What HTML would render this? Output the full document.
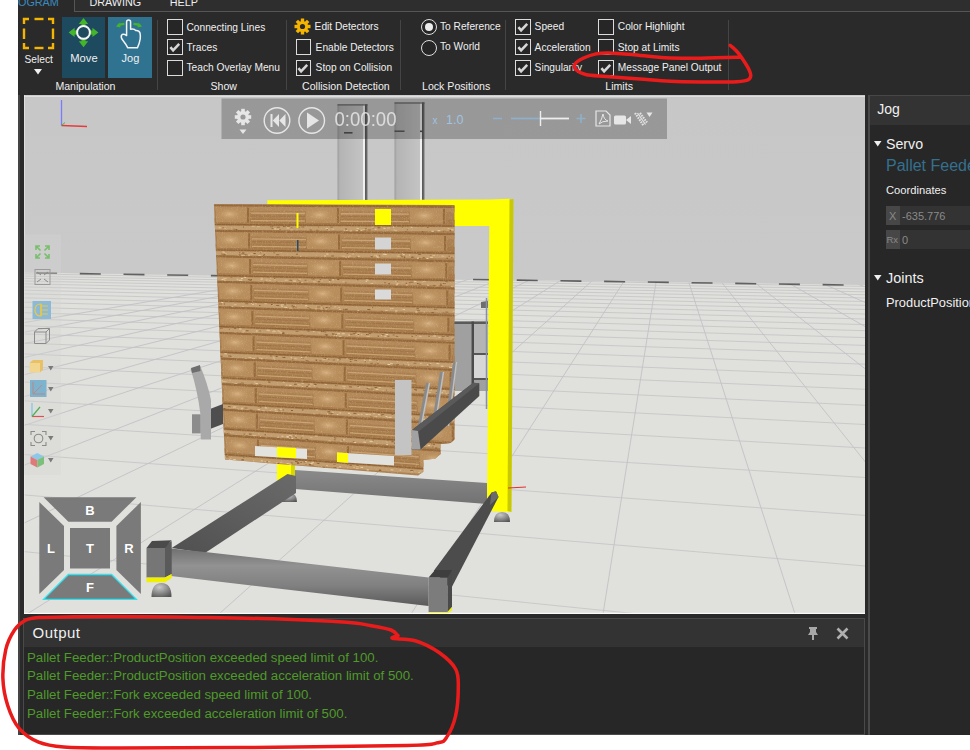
<!DOCTYPE html>
<html><head><meta charset="utf-8">
<style>
*{margin:0;padding:0;box-sizing:border-box}
html,body{width:970px;height:750px;overflow:hidden;background:#fff;font-family:"Liberation Sans",sans-serif;position:relative}
.a{position:absolute}
.t{position:absolute;color:#f0f0f0;font-size:10.2px;white-space:nowrap;line-height:1}
.cb{position:absolute;width:15.7px;height:16.2px;border:1.6px solid #dcdcdc;background:#262626}
.cb svg{position:absolute;left:-1.5px;top:-1.5px}
.sep{position:absolute;top:20px;width:1px;height:70px;background:#454545}
.rd{position:absolute;width:16px;height:16px;border:1.6px solid #e0e0e0;border-radius:50%;background:#262626}
</style></head><body>
<div class="a" style="left:18px;top:0;width:952px;height:735px;background:#2a2a2a"></div>

<!-- tabs -->
<div class="a" style="left:74px;top:-1px;width:896px;height:13px;border-left:1px solid #555;border-bottom:1px solid #555;background:#2e2e2e"></div>
<div class="t" style="left:3px;top:-2.9px;font-size:10.8px;color:#3a8cc0">PROGRAM</div>
<div class="t" style="left:89.4px;top:-2.9px;font-size:10.8px">DRAWING</div>
<div class="t" style="left:169.7px;top:-2.9px;font-size:10.8px">HELP</div>
<div class="a" style="left:0;top:0;width:18px;height:20px;background:#fff"></div>

<!-- ribbon separators -->
<div class="sep" style="left:157px"></div>
<div class="sep" style="left:286px"></div>
<div class="sep" style="left:400px"></div>
<div class="sep" style="left:505px"></div>
<div class="sep" style="left:728px"></div>

<!-- manipulation -->
<svg class="a" style="left:20px;top:15px" width="40" height="40" viewBox="0 0 40 40">
 <g stroke="#f5b400" stroke-width="2.4" fill="none">
  <path d="M4 9 V4 H9"/><path d="M14.5 4 H23.5"/><path d="M28 4 H33 V9"/>
  <path d="M4 13.5 V24"/><path d="M33 13.5 V24"/>
  <path d="M4 28 V33 H9"/><path d="M14.5 33 H23.5"/><path d="M28 33 H33 V28"/>
 </g>
</svg>
<div class="t" style="left:24.5px;top:55.2px">Select</div>
<svg class="a" style="left:34px;top:69px" width="8" height="6"><path d="M0 0 H8 L4 5.5Z" fill="#f0f0f0"/></svg>

<div class="a" style="left:62px;top:17px;width:43px;height:61px;background:#1e4a60"></div>
<svg class="a" style="left:62px;top:17px" width="43" height="40" viewBox="0 0 43 40">
 <g fill="#44b52a">
  <path d="M21.5 0.9 L26.2 7 H23.5 V9.8 H19.5 V7 H16.8Z"/>
  <path d="M21.5 30.3 L26.2 24.2 H23.5 V21 H19.5 V24.2 H16.8Z"/>
  <path d="M6.6 15.4 L12.6 10.7 V13.4 H15.4 V17.4 H12.6 V20.1Z"/>
  <path d="M36.4 15.4 L30.4 10.7 V13.4 H27.6 V17.4 H30.4 V20.1Z"/>
 </g>
 <circle cx="21.5" cy="15.4" r="6.4" fill="none" stroke="#f4f4f4" stroke-width="2"/>
</svg>
<div class="t" style="left:70.3px;top:53.4px;font-size:11.2px">Move</div>

<div class="a" style="left:108px;top:17px;width:44px;height:61px;background:#2f7391"></div>
<svg class="a" style="left:108px;top:17px" width="44" height="40" viewBox="0 0 44 40">
 <path d="M16.5 6.8 Q12.5 7 10 8.6" stroke="#44b52a" stroke-width="2.2" fill="none"/><path d="M8 9.6 L11.5 5.6 L12.5 10.5Z" fill="#44b52a"/>
 <path d="M25.5 6.8 Q29.5 7 32 8.6" stroke="#44b52a" stroke-width="2.2" fill="none"/><path d="M34 9.6 L30.5 5.6 L29.5 10.5Z" fill="#44b52a"/>
 <path d="M18.6 18.5 V5 Q18.6 2.9 20.6 2.9 Q22.6 2.9 22.6 5 V12.2 Q26.5 11.6 27.8 13.6 Q31.2 13.4 32 16 Q32.6 19 32.2 22 Q31.5 26.5 29.4 30.8 H19.8 Q17.8 27 15 23.5 Q12.6 20.5 13.4 18.4 Q15 16.2 18.6 18.5Z" fill="none" stroke="#f4f4f4" stroke-width="1.5" stroke-linejoin="round"/>
</svg>
<div class="t" style="left:121.6px;top:53.4px;font-size:11px">Jog</div>
<div class="t" style="left:55.4px;top:81.1px;font-size:10.6px">Manipulation</div>

<!-- show -->
<div class="cb" style="left:167px;top:19px"></div>
<div class="cb k" style="left:167px;top:39px"><svg width="16" height="16" viewBox="0 0 16 16"><path d="M3.4 8.2 L6.1 11.3 L12.2 4.9" fill="none" stroke="#d6d6d6" stroke-width="2.6" stroke-linejoin="miter" stroke-linecap="butt"/></svg></div>
<div class="cb" style="left:167px;top:60px"></div>
<div class="t" style="left:186.5px;top:22.8px">Connecting Lines</div>
<div class="t" style="left:186.5px;top:43.2px">Traces</div>
<div class="t" style="left:186.5px;top:63.4px">Teach Overlay Menu</div>
<div class="t" style="left:210.5px;top:81.1px;font-size:10.6px">Show</div>

<!-- collision -->
<svg class="a" style="left:294px;top:18px" width="17" height="17" viewBox="0 0 17 17">
 <g fill="#f5b400" transform="translate(8.5 8.5)">
  <circle r="5.6"/>
  <rect x="-1.7" y="-8" width="3.4" height="16"/>
  <rect x="-1.7" y="-8" width="3.4" height="16" transform="rotate(45)"/>
  <rect x="-1.7" y="-8" width="3.4" height="16" transform="rotate(90)"/>
  <rect x="-1.7" y="-8" width="3.4" height="16" transform="rotate(135)"/>
 </g>
 <circle cx="8.5" cy="8.5" r="2.6" fill="#2a2a2a"/>
</svg>
<div class="t" style="left:314.6px;top:21.6px">Edit Detectors</div>
<div class="cb" style="left:295.5px;top:39px"></div>
<div class="cb k" style="left:295.5px;top:60px"><svg width="16" height="16" viewBox="0 0 16 16"><path d="M3.4 8.2 L6.1 11.3 L12.2 4.9" fill="none" stroke="#d6d6d6" stroke-width="2.6" stroke-linejoin="miter" stroke-linecap="butt"/></svg></div>
<div class="t" style="left:315.6px;top:43px">Enable Detectors</div>
<div class="t" style="left:315.6px;top:63.4px">Stop on Collision</div>
<div class="t" style="left:302px;top:81.1px;font-size:10.6px">Collision Detection</div>

<!-- lock -->
<div class="rd" style="left:421px;top:19px"></div>
<div class="a" style="left:425px;top:23px;width:8px;height:8px;border-radius:50%;background:#ececec"></div>
<div class="rd" style="left:421px;top:39.5px"></div>
<div class="t" style="left:440px;top:21.6px">To Reference</div>
<div class="t" style="left:440px;top:41.8px">To World</div>
<div class="t" style="left:422px;top:81.1px;font-size:10.6px">Lock Positions</div>

<!-- limits -->
<div class="cb k" style="left:515px;top:19px"><svg width="16" height="16" viewBox="0 0 16 16"><path d="M3.4 8.2 L6.1 11.3 L12.2 4.9" fill="none" stroke="#d6d6d6" stroke-width="2.6" stroke-linejoin="miter" stroke-linecap="butt"/></svg></div>
<div class="cb k" style="left:515px;top:39px"><svg width="16" height="16" viewBox="0 0 16 16"><path d="M3.4 8.2 L6.1 11.3 L12.2 4.9" fill="none" stroke="#d6d6d6" stroke-width="2.6" stroke-linejoin="miter" stroke-linecap="butt"/></svg></div>
<div class="cb k" style="left:515px;top:60px"><svg width="16" height="16" viewBox="0 0 16 16"><path d="M3.4 8.2 L6.1 11.3 L12.2 4.9" fill="none" stroke="#d6d6d6" stroke-width="2.6" stroke-linejoin="miter" stroke-linecap="butt"/></svg></div>
<div class="t" style="left:534.6px;top:22.4px">Speed</div>
<div class="t" style="left:534.6px;top:43px">Acceleration</div>
<div class="t" style="left:534.6px;top:63.4px">Singularity</div>
<div class="cb" style="left:598px;top:19px"></div>
<div class="cb" style="left:598px;top:39px"></div>
<div class="cb k" style="left:598px;top:60px"><svg width="16" height="16" viewBox="0 0 16 16"><path d="M3.4 8.2 L6.1 11.3 L12.2 4.9" fill="none" stroke="#d6d6d6" stroke-width="2.6" stroke-linejoin="miter" stroke-linecap="butt"/></svg></div>
<div class="t" style="left:617.8px;top:21.8px">Color Highlight</div>
<div class="t" style="left:617.8px;top:43px">Stop at Limits</div>
<div class="t" style="left:617.8px;top:63.4px">Message Panel Output</div>
<div class="t" style="left:605.3px;top:81.1px;font-size:10.6px">Limits</div>

<!-- VIEWPORT -->
<div id="vp" class="a" style="left:24px;top:95px;width:841px;height:519px;background:#c9c9c9;overflow:hidden"><svg style="position:absolute;left:-24px;top:-95px" width="970" height="750" viewBox="0 0 970 750">
<defs>
<linearGradient id="sky" x1="0" y1="0" x2="0" y2="1"><stop offset="0" stop-color="#c7c7c7"/><stop offset="1" stop-color="#cdcdcd"/></linearGradient>
<linearGradient id="pal" x1="0" y1="0" x2="0" y2="1"><stop offset="0" stop-color="#9c6d3e"/><stop offset="0.12" stop-color="#c4925c"/><stop offset="0.45" stop-color="#b9874f"/><stop offset="0.75" stop-color="#ad7a45"/><stop offset="0.86" stop-color="#cfae82"/><stop offset="0.94" stop-color="#a47244"/><stop offset="1" stop-color="#b9a58a"/></linearGradient>
<linearGradient id="palR" x1="0" y1="0" x2="0" y2="1"><stop offset="0" stop-color="#a8794a"/><stop offset="0.5" stop-color="#b5844f"/><stop offset="0.85" stop-color="#c8a678"/><stop offset="1" stop-color="#9a6a3c"/></linearGradient>
<linearGradient id="barV" x1="0" y1="0" x2="1" y2="0"><stop offset="0" stop-color="#a0a0a0"/><stop offset="0.15" stop-color="#c0c0c0"/><stop offset="0.82" stop-color="#b8b8b8"/><stop offset="0.87" stop-color="#6a6a6a"/><stop offset="1" stop-color="#8a8a8a"/></linearGradient>
<linearGradient id="cyl" x1="0" y1="0" x2="0" y2="1"><stop offset="0" stop-color="#8a8a8a"/><stop offset="0.3" stop-color="#9c9c9c"/><stop offset="1" stop-color="#5a5a5a"/></linearGradient>
<linearGradient id="backbar" x1="0" y1="0" x2="0" y2="1"><stop offset="0" stop-color="#8a8a8a"/><stop offset="1" stop-color="#727272"/></linearGradient>
<radialGradient id="foot" cx="0.4" cy="0.3" r="0.8"><stop offset="0" stop-color="#c8c8c8"/><stop offset="1" stop-color="#555"/></radialGradient>
<radialGradient id="blk"><stop offset="0" stop-color="#dbb585" stop-opacity="0.95"/><stop offset="1" stop-color="#b88d5c" stop-opacity="0"/></radialGradient>
</defs>
<rect x="24" y="95" width="841" height="519" fill="url(#sky)"/>
<polygon points="24.0,272.5 865.0,285.0 865.0,614.0 24.0,614.0" fill="#e0e0dc" />
<clipPath id="floorc"><polygon points="24,272.5 865,285 865,614 24,614"/></clipPath>
<g clip-path="url(#floorc)" stroke-width="0.9">
<line x1="24" y1="637.0" x2="865" y2="744.0" stroke="#c6c6c8"/>
<line x1="24" y1="551.6" x2="865" y2="637.0" stroke="#c6c6c8"/>
<line x1="24" y1="494.9" x2="865" y2="566.0" stroke="#c6c6c8"/>
<line x1="24" y1="454.5" x2="865" y2="515.4" stroke="#c6c6c8"/>
<line x1="24" y1="424.3" x2="865" y2="477.5" stroke="#c6c6c8"/>
<line x1="24" y1="400.8" x2="865" y2="448.0" stroke="#c6c6c8"/>
<line x1="24" y1="382.0" x2="865" y2="424.5" stroke="#c6c6c8"/>
<line x1="24" y1="366.7" x2="865" y2="405.3" stroke="#c6c6c8"/>
<line x1="24" y1="353.9" x2="865" y2="389.3" stroke="#c6c6c8"/>
<line x1="24" y1="343.1" x2="865" y2="375.8" stroke="#c6c6c8"/>
<line x1="24" y1="333.9" x2="865" y2="364.2" stroke="#c6c6c8"/>
<line x1="24" y1="325.8" x2="865" y2="354.1" stroke="#c6c6c8"/>
<line x1="24" y1="318.8" x2="865" y2="345.4" stroke="#c6c6c8"/>
<line x1="24" y1="312.7" x2="865" y2="337.6" stroke="#c6c6c8"/>
<line x1="24" y1="307.2" x2="865" y2="330.7" stroke="#c6c6c8"/>
<line x1="24" y1="302.2" x2="865" y2="324.6" stroke="#c6c6c8"/>
<line x1="24" y1="297.8" x2="865" y2="319.0" stroke="#c6c6c8"/>
<line x1="24" y1="293.8" x2="865" y2="314.0" stroke="#c6c6c8"/>
<line x1="24" y1="290.2" x2="865" y2="309.5" stroke="#c6c6c8"/>
<line x1="24" y1="286.9" x2="865" y2="305.3" stroke="#c6c6c8"/>
<line x1="24" y1="283.8" x2="865" y2="301.5" stroke="#c6c6c8"/>
<line x1="24" y1="281.0" x2="865" y2="298.0" stroke="#c6c6c8"/>
<line x1="24" y1="278.4" x2="865" y2="294.7" stroke="#c6c6c8"/>
<line x1="24" y1="276.1" x2="865" y2="291.8" stroke="#c6c6c8"/>
<line x1="24" y1="273.8" x2="865" y2="289.0" stroke="#c6c6c8"/>
<line x1="24" y1="271.8" x2="865" y2="286.4" stroke="#c6c6c8"/>
<line x1="24" y1="269.8" x2="865" y2="284.0" stroke="#c6c6c8"/>
<line x1="24" y1="268.0" x2="865" y2="281.7" stroke="#c6c6c8"/>
<line x1="24" y1="266.3" x2="865" y2="279.6" stroke="#c6c6c8"/>
<line x1="24" y1="264.8" x2="865" y2="277.6" stroke="#c6c6c8"/>
<line x1="24" y1="263.3" x2="865" y2="275.7" stroke="#c6c6c8"/>
<line x1="24" y1="261.8" x2="865" y2="274.0" stroke="#c6c6c8"/>
<line x1="24" y1="260.5" x2="865" y2="272.3" stroke="#c6c6c8"/>
<line x1="24" y1="259.3" x2="865" y2="270.7" stroke="#c6c6c8"/>
<line x1="24" y1="258.1" x2="865" y2="269.2" stroke="#c6c6c8"/>
<line x1="24" y1="256.9" x2="865" y2="267.8" stroke="#c6c6c8"/>
<line x1="24" y1="255.9" x2="865" y2="266.5" stroke="#c6c6c8"/>
<line x1="24" y1="254.8" x2="865" y2="265.2" stroke="#c6c6c8"/>
<line x1="24" y1="253.9" x2="865" y2="264.0" stroke="#c6c6c8"/>
<line x1="24" y1="252.9" x2="865" y2="262.8" stroke="#c6c6c8"/>
<line x1="24" y1="252.1" x2="865" y2="261.7" stroke="#c6c6c8"/>
<line x1="24" y1="251.2" x2="865" y2="260.6" stroke="#c6c6c8"/>
<line x1="24" y1="250.4" x2="865" y2="259.6" stroke="#c6c6c8"/>
<line x1="24" y1="249.6" x2="865" y2="258.6" stroke="#c6c6c8"/>
<line x1="24" y1="248.9" x2="865" y2="257.7" stroke="#c6c6c8"/>
<line x1="24" y1="248.2" x2="865" y2="256.8" stroke="#c6c6c8"/>
<line x1="24" y1="247.5" x2="865" y2="256.0" stroke="#c6c6c8"/>
<line x1="24" y1="246.8" x2="865" y2="255.1" stroke="#c6c6c8"/>
<line x1="24" y1="246.2" x2="865" y2="254.3" stroke="#c6c6c8"/>
<line x1="24" y1="245.6" x2="865" y2="253.6" stroke="#c6c6c8"/>
<line x1="24" y1="245.0" x2="865" y2="252.8" stroke="#c6c6c8"/>
<line x1="24" y1="244.4" x2="865" y2="252.1" stroke="#c6c6c8"/>
<line x1="24" y1="243.9" x2="865" y2="251.5" stroke="#c6c6c8"/>
<line x1="24" y1="243.4" x2="865" y2="250.8" stroke="#c6c6c8"/>
<line x1="24" y1="242.9" x2="865" y2="250.2" stroke="#c6c6c8"/>
<line x1="24" y1="242.4" x2="865" y2="249.5" stroke="#c6c6c8"/>
<line x1="24" y1="241.9" x2="865" y2="249.0" stroke="#c6c6c8"/>
<line x1="24" y1="241.4" x2="865" y2="248.4" stroke="#c6c6c8"/>
<line x1="24" y1="241.0" x2="865" y2="247.8" stroke="#c6c6c8"/>
<line x1="24" y1="240.6" x2="865" y2="247.3" stroke="#c6c6c8"/>
<line x1="24" y1="240.2" x2="865" y2="246.8" stroke="#c6c6c8"/>
<line x1="-1701.0" y1="614" x2="335.5" y2="270" stroke="#c2c2c6"/>
<line x1="-1509.0" y1="614" x2="362.4" y2="270" stroke="#c2c2c6"/>
<line x1="-1317.0" y1="614" x2="389.2" y2="270" stroke="#c2c2c6"/>
<line x1="-1125.0" y1="614" x2="416.1" y2="270" stroke="#c2c2c6"/>
<line x1="-933.0" y1="614" x2="443.0" y2="270" stroke="#c2c2c6"/>
<line x1="-741.0" y1="614" x2="469.9" y2="270" stroke="#c2c2c6"/>
<line x1="-549.0" y1="614" x2="496.8" y2="270" stroke="#c2c2c6"/>
<line x1="-357.0" y1="614" x2="523.6" y2="270" stroke="#c2c2c6"/>
<line x1="-165.0" y1="614" x2="550.5" y2="270" stroke="#c2c2c6"/>
<line x1="27.0" y1="614" x2="577.4" y2="270" stroke="#c2c2c6"/>
<line x1="219.0" y1="614" x2="604.3" y2="270" stroke="#c2c2c6"/>
<line x1="411.0" y1="614" x2="631.2" y2="270" stroke="#c2c2c6"/>
<line x1="603.0" y1="614" x2="658.0" y2="270" stroke="#c2c2c6"/>
<line x1="795.0" y1="614" x2="684.9" y2="270" stroke="#c2c2c6"/>
<line x1="987.0" y1="614" x2="711.8" y2="270" stroke="#c2c2c6"/>
<line x1="1179.0" y1="614" x2="738.7" y2="270" stroke="#c2c2c6"/>
<line x1="1371.0" y1="614" x2="765.6" y2="270" stroke="#c2c2c6"/>
<line x1="1563.0" y1="614" x2="792.4" y2="270" stroke="#c2c2c6"/>
<line x1="1755.0" y1="614" x2="819.3" y2="270" stroke="#c2c2c6"/>
<line x1="1947.0" y1="614" x2="846.2" y2="270" stroke="#c2c2c6"/>
</g>
<line x1="24" y1="272.8" x2="865" y2="285.3" stroke="#3a3a3a" stroke-width="1.6" stroke-dasharray="21,22.7" stroke-dashoffset="31.6" opacity="0.75"/>
<linearGradient id="bar1" x1="0" y1="0" x2="1" y2="0"><stop offset="0" stop-color="#9c9c9c"/><stop offset="0.08" stop-color="#b4b4b4"/><stop offset="0.85" stop-color="#c4c4c4"/><stop offset="0.86" stop-color="#f0f0f0"/><stop offset="0.9" stop-color="#f0f0f0"/><stop offset="0.92" stop-color="#555"/><stop offset="1" stop-color="#777"/></linearGradient>
<rect x="337.5" y="104.3" width="30" height="100" fill="url(#bar1)"/>
<rect x="337.5" y="104.3" width="30" height="1.2" fill="#666"/>
<rect x="394.5" y="102.4" width="30" height="100" fill="url(#bar1)"/>
<rect x="394.5" y="102.4" width="30" height="1.2" fill="#666"/>
<rect x="344" y="132" width="8.5" height="1.6" fill="#555"/>
<rect x="394.5" y="130.5" width="10" height="1.4" fill="#555"/>
<rect x="420" y="130.5" width="2.5" height="1.6" fill="#555"/>
<polygon points="267.3,200.3 489.5,199.5 509.7,198.8 509.7,226.0 267.3,226.0" fill="#ffff00" />
<polygon points="489.5,201.0 513.0,200.0 511.0,512.0 487.0,511.0" fill="#ffff00" />
<polygon points="509.5,199.5 513.5,199.0 511.5,512.0 507.5,511.0" fill="#c9c900" />
<polygon points="454.0,321.5 488.0,321.5 488.0,391.0 454.0,391.0" fill="#a0a0a0" />
<polygon points="454.0,321.5 488.0,321.5 488.0,324.0 454.0,324.0" fill="#5a5a5a" />
<polygon points="471.5,324.0 488.0,324.0 488.0,354.0 471.5,354.0" fill="#b4b4b4" />
<polygon points="471.5,321.5 474.0,321.5 474.0,391.0 471.5,391.0" fill="#4a4a4a" />
<polygon points="474.0,353.0 488.0,353.0 488.0,355.0 474.0,355.0" fill="#555" />
<polygon points="474.0,378.0 488.0,378.0 488.0,380.0 474.0,380.0" fill="#555" />
<polygon points="474.0,355.0 488.0,355.0 488.0,378.0 474.0,378.0" fill="#d6d6d6" />
<polygon points="481.0,302.0 488.0,301.0 488.0,308.0 481.0,308.0" fill="#6e6e6e" />
<line x1="486.5" y1="298" x2="486.5" y2="409" stroke="#8890a0" stroke-width="1.5"/>
<line x1="508" y1="488" x2="526" y2="487" stroke="#e03030" stroke-width="1"/>
<polygon points="295.0,470.0 487.0,483.0 487.0,504.0 295.0,489.0" fill="url(#backbar)" />
<polygon points="277.0,448.0 295.0,448.0 295.0,493.0 277.0,493.0" fill="#ffff00" />
<polygon points="291.0,448.0 295.0,448.0 295.0,493.0 291.0,493.0" fill="#d8d800" />
<path d="M282 502 Q282 493 289.5 493 Q297 493 297 502 Z" fill="url(#foot)"/>
<path d="M494 522 Q494 512 502 512 Q510 512 510 522 Z" fill="url(#foot)"/>
<clipPath id="stk"><polygon points="213.9,204.2 454.5,205 454.5,439.3 450.7,443 440.5,444 440.5,454 435,458.8 423.3,459.7 423.3,471.7 418.2,475.5 225,459.5"/></clipPath>
<g clip-path="url(#stk)">
<rect x="210" y="200" width="250" height="280" fill="#ab8051"/>
<g transform="matrix(1 0.00692 0 1 0 -1.480)">
<rect x="213.9" y="204.2" width="242.6" height="2.2" fill="#94683a"/>
<rect x="213.9" y="206.4" width="242.6" height="4" fill="#b4895a"/>
<rect x="213.9" y="218.2" width="242.6" height="5" fill="#a57848"/>
<rect x="215.9" y="207.2" width="34" height="15" fill="#b88d5c"/>
<ellipse cx="229.5" cy="214.2" rx="14.3" ry="7" fill="url(#blk)"/>
<rect x="246.9" y="207.2" width="2.2" height="15" fill="#8e6234" opacity="0.8"/>
<rect x="305.9" y="207.2" width="34" height="15" fill="#b88d5c"/>
<ellipse cx="319.5" cy="214.2" rx="14.3" ry="7" fill="url(#blk)"/>
<rect x="336.9" y="207.2" width="2.2" height="15" fill="#8e6234" opacity="0.8"/>
<rect x="409.9" y="207.2" width="36" height="15" fill="#b88d5c"/>
<ellipse cx="424.3" cy="214.2" rx="15.1" ry="7" fill="url(#blk)"/>
<rect x="442.9" y="207.2" width="2.2" height="15" fill="#8e6234" opacity="0.8"/>
<rect x="250.9" y="212.2" width="54.0" height="1.3" fill="#caa374"/>
<rect x="250.9" y="219.7" width="54.0" height="1.3" fill="#c9a272"/>
<rect x="250.9" y="215.2" width="54.0" height="1" fill="#9c6e3e" opacity="0.7"/>
<rect x="340.9" y="212.2" width="68.0" height="1.3" fill="#caa374"/>
<rect x="340.9" y="219.7" width="68.0" height="1.3" fill="#c9a272"/>
<rect x="340.9" y="215.2" width="68.0" height="1" fill="#9c6e3e" opacity="0.7"/>
<rect x="213.9" y="223.7" width="242.6" height="1.4" fill="#8d6134"/>
<rect x="213.9" y="225.7" width="242.6" height="4" fill="#c29d6f"/>
<rect x="271.6" y="227.6" width="1.8" height="1" fill="#9a6c3c"/>
<rect x="365.7" y="225.5" width="1.0" height="1" fill="#9a6c3c"/>
<rect x="276.8" y="226.3" width="3.2" height="1" fill="#9a6c3c"/>
<rect x="345.1" y="227.7" width="1.9" height="1" fill="#8a5e32"/>
<rect x="270.2" y="225.9" width="3.0" height="1" fill="#9a6c3c"/>
<rect x="393.7" y="228.2" width="1.1" height="1" fill="#e6cfa6"/>
<rect x="287.0" y="225.3" width="2.9" height="1" fill="#9a6c3c"/>
<rect x="358.2" y="229.3" width="1.9" height="1" fill="#9a6c3c"/>
<rect x="309.7" y="228.8" width="2.0" height="1" fill="#8a5e32"/>
<rect x="427.1" y="225.6" width="1.3" height="1" fill="#8a5e32"/>
<rect x="276.5" y="228.2" width="2.7" height="1" fill="#dcbc8c"/>
<rect x="316.1" y="229.0" width="2.3" height="1" fill="#9a6c3c"/>
<rect x="355.6" y="229.3" width="2.5" height="1" fill="#e6cfa6"/>
<rect x="421.7" y="229.7" width="2.5" height="1" fill="#8a5e32"/>
<rect x="383.4" y="226.7" width="2.2" height="1" fill="#e6cfa6"/>
<rect x="387.1" y="226.2" width="2.8" height="1" fill="#dcbc8c"/>
<rect x="283.0" y="225.5" width="2.9" height="1" fill="#9a6c3c"/>
<rect x="235.4" y="228.8" width="1.9" height="1" fill="#8a5e32"/>
<rect x="218.8" y="227.1" width="1.9" height="1" fill="#e6cfa6"/>
<rect x="224.6" y="228.0" width="1.1" height="1" fill="#dcbc8c"/>
<rect x="347.5" y="229.3" width="1.6" height="1" fill="#8a5e32"/>
<rect x="456.1" y="226.6" width="1.2" height="1" fill="#e6cfa6"/>
<rect x="444.1" y="229.6" width="1.6" height="1" fill="#dcbc8c"/>
<rect x="251.8" y="225.4" width="2.9" height="1" fill="#dcbc8c"/>
<rect x="301.3" y="225.8" width="2.9" height="1" fill="#9a6c3c"/>
<rect x="325.6" y="227.5" width="2.4" height="1" fill="#e6cfa6"/>
<rect x="364.3" y="229.4" width="2.1" height="1" fill="#9a6c3c"/>
<rect x="367.8" y="228.4" width="3.1" height="1" fill="#9a6c3c"/>
<rect x="451.1" y="227.5" width="2.2" height="1" fill="#e6cfa6"/>
<rect x="405.2" y="229.6" width="1.7" height="1" fill="#9a6c3c"/>
<rect x="363.3" y="228.0" width="1.1" height="1" fill="#dcbc8c"/>
<rect x="327.0" y="228.3" width="1.8" height="1" fill="#dcbc8c"/>
<rect x="392.9" y="225.3" width="1.1" height="1" fill="#e6cfa6"/>
<rect x="447.6" y="226.3" width="2.0" height="1" fill="#dcbc8c"/>
<rect x="256.9" y="226.0" width="2.7" height="1" fill="#dcbc8c"/>
<rect x="286.8" y="226.9" width="2.7" height="1" fill="#e6cfa6"/>
<rect x="449.6" y="228.3" width="1.3" height="1" fill="#8a5e32"/>
<rect x="372.5" y="226.4" width="1.7" height="1" fill="#9a6c3c"/>
<rect x="371.5" y="225.6" width="2.3" height="1" fill="#dcbc8c"/>
<rect x="377.6" y="226.2" width="2.8" height="1" fill="#8a5e32"/>
<rect x="233.3" y="228.5" width="1.5" height="1" fill="#9a6c3c"/>
<rect x="279.5" y="228.7" width="1.1" height="1" fill="#8a5e32"/>
<rect x="290.4" y="229.0" width="2.3" height="1" fill="#dcbc8c"/>
<rect x="296.4" y="228.9" width="1.2" height="1" fill="#dcbc8c"/>
<rect x="356.9" y="227.1" width="2.1" height="1" fill="#dcbc8c"/>
<rect x="326.6" y="228.1" width="1.6" height="1" fill="#9a6c3c"/>
<rect x="222.5" y="227.1" width="1.4" height="1" fill="#9a6c3c"/>
<rect x="442.7" y="229.2" width="3.2" height="1" fill="#9a6c3c"/>
<rect x="349.5" y="229.6" width="2.6" height="1" fill="#e6cfa6"/>
<rect x="394.8" y="229.0" width="2.5" height="1" fill="#dcbc8c"/>
<rect x="345.8" y="229.2" width="2.9" height="1" fill="#dcbc8c"/>
<rect x="243.0" y="226.3" width="1.1" height="1" fill="#8a5e32"/>
<rect x="431.4" y="229.2" width="2.3" height="1" fill="#e6cfa6"/>
<rect x="330.6" y="225.7" width="2.1" height="1" fill="#8a5e32"/>
<rect x="374.7" y="227.6" width="1.9" height="1" fill="#e6cfa6"/>
<rect x="296.7" y="226.3" width="2.9" height="1" fill="#9a6c3c"/>
<rect x="410.8" y="225.5" width="1.5" height="1" fill="#e6cfa6"/>
<rect x="343.6" y="228.9" width="1.4" height="1" fill="#dcbc8c"/>
<rect x="437.5" y="228.8" width="2.8" height="1" fill="#e6cfa6"/>
<rect x="332.2" y="227.8" width="1.9" height="1" fill="#dcbc8c"/>
<rect x="274.1" y="228.0" width="2.1" height="1" fill="#e6cfa6"/>
<rect x="328.6" y="228.7" width="1.0" height="1" fill="#e6cfa6"/>
<rect x="402.0" y="225.4" width="1.1" height="1" fill="#9a6c3c"/>
<rect x="450.4" y="229.0" width="1.2" height="1" fill="#9a6c3c"/>
<rect x="290.5" y="226.6" width="1.8" height="1" fill="#9a6c3c"/>
<rect x="356.2" y="226.8" width="1.4" height="1" fill="#dcbc8c"/>
<rect x="317.9" y="225.8" width="1.0" height="1" fill="#9a6c3c"/>
<rect x="406.8" y="227.8" width="1.1" height="1" fill="#9a6c3c"/>
<rect x="360.5" y="228.7" width="1.8" height="1" fill="#e6cfa6"/>
<rect x="365.0" y="227.1" width="1.8" height="1" fill="#9a6c3c"/>
</g>
<g transform="matrix(1 0.01408 0 1 0 -3.014)">
<rect x="215.01000000000002" y="229.7" width="241.5" height="2.2" fill="#94683a"/>
<rect x="215.01000000000002" y="231.9" width="241.5" height="4" fill="#b4895a"/>
<rect x="215.01000000000002" y="243.7" width="241.5" height="5" fill="#a57848"/>
<rect x="217.0" y="232.7" width="34" height="15" fill="#b88d5c"/>
<ellipse cx="230.6" cy="239.7" rx="14.3" ry="7" fill="url(#blk)"/>
<rect x="248.0" y="232.7" width="2.2" height="15" fill="#8e6234" opacity="0.8"/>
<rect x="307.0" y="232.7" width="34" height="15" fill="#b88d5c"/>
<ellipse cx="320.6" cy="239.7" rx="14.3" ry="7" fill="url(#blk)"/>
<rect x="338.0" y="232.7" width="2.2" height="15" fill="#8e6234" opacity="0.8"/>
<rect x="411.0" y="232.7" width="36" height="15" fill="#b88d5c"/>
<ellipse cx="425.4" cy="239.7" rx="15.1" ry="7" fill="url(#blk)"/>
<rect x="444.0" y="232.7" width="2.2" height="15" fill="#8e6234" opacity="0.8"/>
<rect x="252.0" y="237.7" width="54.0" height="1.3" fill="#caa374"/>
<rect x="252.0" y="245.2" width="54.0" height="1.3" fill="#c9a272"/>
<rect x="252.0" y="240.7" width="54.0" height="1" fill="#9c6e3e" opacity="0.7"/>
<rect x="342.0" y="237.7" width="68.0" height="1.3" fill="#caa374"/>
<rect x="342.0" y="245.2" width="68.0" height="1.3" fill="#c9a272"/>
<rect x="342.0" y="240.7" width="68.0" height="1" fill="#9c6e3e" opacity="0.7"/>
<rect x="215.0" y="249.2" width="241.5" height="1.4" fill="#8d6134"/>
<rect x="215.0" y="251.2" width="241.5" height="4" fill="#c29d6f"/>
<rect x="398.6" y="252.1" width="3.1" height="1" fill="#9a6c3c"/>
<rect x="326.3" y="251.8" width="2.2" height="1" fill="#e6cfa6"/>
<rect x="409.0" y="251.7" width="1.3" height="1" fill="#e6cfa6"/>
<rect x="441.2" y="252.4" width="3.0" height="1" fill="#dcbc8c"/>
<rect x="244.3" y="253.8" width="3.1" height="1" fill="#9a6c3c"/>
<rect x="376.2" y="254.0" width="2.2" height="1" fill="#e6cfa6"/>
<rect x="411.0" y="253.9" width="2.0" height="1" fill="#8a5e32"/>
<rect x="402.0" y="250.9" width="1.2" height="1" fill="#e6cfa6"/>
<rect x="374.2" y="252.4" width="2.8" height="1" fill="#dcbc8c"/>
<rect x="418.2" y="251.2" width="2.9" height="1" fill="#9a6c3c"/>
<rect x="416.9" y="255.0" width="2.3" height="1" fill="#e6cfa6"/>
<rect x="223.8" y="254.1" width="2.1" height="1" fill="#8a5e32"/>
<rect x="240.8" y="254.1" width="3.1" height="1" fill="#e6cfa6"/>
<rect x="347.9" y="254.6" width="1.4" height="1" fill="#e6cfa6"/>
<rect x="273.5" y="251.5" width="1.5" height="1" fill="#9a6c3c"/>
<rect x="276.1" y="253.4" width="3.1" height="1" fill="#9a6c3c"/>
<rect x="448.4" y="252.4" width="1.5" height="1" fill="#9a6c3c"/>
<rect x="418.7" y="255.0" width="1.9" height="1" fill="#9a6c3c"/>
<rect x="252.7" y="252.5" width="3.0" height="1" fill="#8a5e32"/>
<rect x="238.2" y="254.0" width="3.0" height="1" fill="#9a6c3c"/>
<rect x="356.6" y="254.5" width="1.3" height="1" fill="#8a5e32"/>
<rect x="250.4" y="253.0" width="3.1" height="1" fill="#dcbc8c"/>
<rect x="377.1" y="254.5" width="2.3" height="1" fill="#dcbc8c"/>
<rect x="429.8" y="252.1" width="1.6" height="1" fill="#9a6c3c"/>
<rect x="263.5" y="253.2" width="1.5" height="1" fill="#9a6c3c"/>
<rect x="402.0" y="251.3" width="3.2" height="1" fill="#9a6c3c"/>
<rect x="384.4" y="251.6" width="2.3" height="1" fill="#e6cfa6"/>
<rect x="331.2" y="253.9" width="2.9" height="1" fill="#9a6c3c"/>
<rect x="404.1" y="254.6" width="1.1" height="1" fill="#8a5e32"/>
<rect x="430.2" y="253.6" width="2.7" height="1" fill="#e6cfa6"/>
<rect x="446.5" y="254.5" width="1.5" height="1" fill="#8a5e32"/>
<rect x="402.4" y="251.3" width="2.4" height="1" fill="#e6cfa6"/>
<rect x="432.3" y="251.8" width="2.9" height="1" fill="#dcbc8c"/>
<rect x="259.3" y="251.1" width="2.8" height="1" fill="#e6cfa6"/>
<rect x="237.4" y="254.4" width="1.6" height="1" fill="#dcbc8c"/>
<rect x="324.2" y="254.0" width="1.7" height="1" fill="#e6cfa6"/>
<rect x="295.9" y="252.6" width="2.1" height="1" fill="#8a5e32"/>
<rect x="370.6" y="254.0" width="2.1" height="1" fill="#8a5e32"/>
<rect x="346.5" y="251.2" width="1.6" height="1" fill="#9a6c3c"/>
<rect x="242.2" y="254.7" width="3.0" height="1" fill="#e6cfa6"/>
<rect x="342.4" y="253.8" width="2.5" height="1" fill="#dcbc8c"/>
<rect x="397.9" y="252.0" width="2.5" height="1" fill="#dcbc8c"/>
<rect x="240.9" y="254.9" width="1.7" height="1" fill="#e6cfa6"/>
<rect x="376.1" y="253.0" width="1.1" height="1" fill="#dcbc8c"/>
<rect x="378.9" y="253.2" width="1.4" height="1" fill="#8a5e32"/>
<rect x="258.3" y="254.7" width="2.4" height="1" fill="#e6cfa6"/>
<rect x="241.1" y="253.2" width="3.0" height="1" fill="#9a6c3c"/>
<rect x="349.0" y="253.6" width="2.0" height="1" fill="#dcbc8c"/>
<rect x="403.9" y="253.9" width="1.2" height="1" fill="#8a5e32"/>
<rect x="397.2" y="253.1" width="2.6" height="1" fill="#dcbc8c"/>
<rect x="239.1" y="251.9" width="1.1" height="1" fill="#8a5e32"/>
<rect x="225.2" y="253.0" width="1.5" height="1" fill="#dcbc8c"/>
<rect x="426.4" y="254.9" width="2.0" height="1" fill="#e6cfa6"/>
<rect x="300.2" y="254.5" width="1.2" height="1" fill="#dcbc8c"/>
<rect x="357.5" y="253.7" width="2.2" height="1" fill="#e6cfa6"/>
<rect x="259.6" y="251.5" width="1.9" height="1" fill="#9a6c3c"/>
<rect x="412.0" y="254.0" width="2.3" height="1" fill="#8a5e32"/>
<rect x="422.6" y="254.3" width="2.2" height="1" fill="#8a5e32"/>
<rect x="352.3" y="251.6" width="1.6" height="1" fill="#dcbc8c"/>
<rect x="222.3" y="254.3" width="3.0" height="1" fill="#9a6c3c"/>
<rect x="291.3" y="254.8" width="1.7" height="1" fill="#9a6c3c"/>
<rect x="450.9" y="253.8" width="1.7" height="1" fill="#9a6c3c"/>
<rect x="222.3" y="251.5" width="2.4" height="1" fill="#e6cfa6"/>
<rect x="401.1" y="253.7" width="2.1" height="1" fill="#9a6c3c"/>
<rect x="263.0" y="254.2" width="1.5" height="1" fill="#9a6c3c"/>
<rect x="242.0" y="252.0" width="2.4" height="1" fill="#8a5e32"/>
<rect x="247.8" y="254.2" width="2.4" height="1" fill="#e6cfa6"/>
<rect x="221.2" y="253.5" width="2.1" height="1" fill="#9a6c3c"/>
<rect x="345.1" y="254.9" width="1.7" height="1" fill="#dcbc8c"/>
<rect x="382.8" y="251.3" width="2.9" height="1" fill="#e6cfa6"/>
</g>
<g transform="matrix(1 0.02125 0 1 0 -4.547)">
<rect x="216.12" y="255.2" width="240.4" height="2.2" fill="#94683a"/>
<rect x="216.12" y="257.4" width="240.4" height="4" fill="#b4895a"/>
<rect x="216.12" y="269.2" width="240.4" height="5" fill="#a57848"/>
<rect x="218.1" y="258.2" width="34" height="15" fill="#b88d5c"/>
<ellipse cx="231.7" cy="265.2" rx="14.3" ry="7" fill="url(#blk)"/>
<rect x="249.1" y="258.2" width="2.2" height="15" fill="#8e6234" opacity="0.8"/>
<rect x="308.1" y="258.2" width="34" height="15" fill="#b88d5c"/>
<ellipse cx="321.7" cy="265.2" rx="14.3" ry="7" fill="url(#blk)"/>
<rect x="339.1" y="258.2" width="2.2" height="15" fill="#8e6234" opacity="0.8"/>
<rect x="412.1" y="258.2" width="36" height="15" fill="#b88d5c"/>
<ellipse cx="426.5" cy="265.2" rx="15.1" ry="7" fill="url(#blk)"/>
<rect x="445.1" y="258.2" width="2.2" height="15" fill="#8e6234" opacity="0.8"/>
<rect x="253.1" y="263.2" width="54.0" height="1.3" fill="#caa374"/>
<rect x="253.1" y="270.7" width="54.0" height="1.3" fill="#c9a272"/>
<rect x="253.1" y="266.2" width="54.0" height="1" fill="#9c6e3e" opacity="0.7"/>
<rect x="343.1" y="263.2" width="68.0" height="1.3" fill="#caa374"/>
<rect x="343.1" y="270.7" width="68.0" height="1.3" fill="#c9a272"/>
<rect x="343.1" y="266.2" width="68.0" height="1" fill="#9c6e3e" opacity="0.7"/>
<rect x="216.1" y="274.7" width="240.4" height="1.4" fill="#8d6134"/>
<rect x="216.1" y="276.7" width="240.4" height="4" fill="#c29d6f"/>
<rect x="388.2" y="279.5" width="1.8" height="1" fill="#8a5e32"/>
<rect x="440.1" y="280.0" width="2.0" height="1" fill="#8a5e32"/>
<rect x="332.7" y="276.7" width="1.1" height="1" fill="#e6cfa6"/>
<rect x="419.3" y="279.3" width="1.9" height="1" fill="#9a6c3c"/>
<rect x="384.2" y="278.6" width="1.9" height="1" fill="#9a6c3c"/>
<rect x="289.4" y="278.2" width="2.7" height="1" fill="#9a6c3c"/>
<rect x="321.5" y="278.2" width="1.1" height="1" fill="#dcbc8c"/>
<rect x="304.3" y="277.8" width="2.2" height="1" fill="#9a6c3c"/>
<rect x="269.9" y="276.2" width="1.5" height="1" fill="#dcbc8c"/>
<rect x="250.6" y="278.2" width="1.4" height="1" fill="#8a5e32"/>
<rect x="221.5" y="278.8" width="2.1" height="1" fill="#e6cfa6"/>
<rect x="249.6" y="278.9" width="2.0" height="1" fill="#8a5e32"/>
<rect x="230.5" y="276.3" width="2.0" height="1" fill="#9a6c3c"/>
<rect x="224.0" y="279.4" width="1.5" height="1" fill="#e6cfa6"/>
<rect x="311.5" y="276.3" width="3.1" height="1" fill="#8a5e32"/>
<rect x="274.2" y="277.9" width="1.4" height="1" fill="#dcbc8c"/>
<rect x="365.7" y="277.7" width="1.3" height="1" fill="#e6cfa6"/>
<rect x="410.2" y="277.5" width="3.2" height="1" fill="#9a6c3c"/>
<rect x="405.8" y="280.5" width="2.1" height="1" fill="#dcbc8c"/>
<rect x="223.4" y="277.7" width="3.2" height="1" fill="#dcbc8c"/>
<rect x="238.6" y="279.2" width="3.1" height="1" fill="#e6cfa6"/>
<rect x="241.3" y="279.2" width="1.0" height="1" fill="#e6cfa6"/>
<rect x="331.9" y="277.0" width="2.1" height="1" fill="#dcbc8c"/>
<rect x="264.4" y="280.5" width="2.0" height="1" fill="#9a6c3c"/>
<rect x="436.6" y="280.4" width="1.1" height="1" fill="#dcbc8c"/>
<rect x="396.8" y="279.0" width="1.9" height="1" fill="#dcbc8c"/>
<rect x="260.4" y="278.0" width="2.1" height="1" fill="#dcbc8c"/>
<rect x="345.1" y="279.7" width="1.9" height="1" fill="#9a6c3c"/>
<rect x="417.0" y="278.7" width="3.0" height="1" fill="#dcbc8c"/>
<rect x="408.8" y="278.1" width="2.0" height="1" fill="#9a6c3c"/>
<rect x="299.1" y="279.9" width="2.1" height="1" fill="#9a6c3c"/>
<rect x="444.4" y="276.4" width="1.4" height="1" fill="#e6cfa6"/>
<rect x="413.9" y="276.6" width="2.5" height="1" fill="#e6cfa6"/>
<rect x="293.1" y="278.9" width="2.8" height="1" fill="#e6cfa6"/>
<rect x="427.3" y="280.1" width="2.0" height="1" fill="#dcbc8c"/>
<rect x="455.8" y="276.2" width="1.4" height="1" fill="#e6cfa6"/>
<rect x="297.5" y="277.6" width="2.0" height="1" fill="#8a5e32"/>
<rect x="274.0" y="276.4" width="1.3" height="1" fill="#8a5e32"/>
<rect x="356.9" y="276.2" width="1.5" height="1" fill="#8a5e32"/>
<rect x="269.0" y="278.7" width="1.9" height="1" fill="#dcbc8c"/>
<rect x="405.7" y="278.6" width="1.4" height="1" fill="#8a5e32"/>
<rect x="365.7" y="276.3" width="2.8" height="1" fill="#e6cfa6"/>
<rect x="422.6" y="276.6" width="3.1" height="1" fill="#dcbc8c"/>
<rect x="236.7" y="278.3" width="1.5" height="1" fill="#e6cfa6"/>
<rect x="370.4" y="279.6" width="2.9" height="1" fill="#dcbc8c"/>
<rect x="313.0" y="279.1" width="2.7" height="1" fill="#dcbc8c"/>
<rect x="416.9" y="278.8" width="2.8" height="1" fill="#8a5e32"/>
<rect x="244.2" y="276.2" width="1.7" height="1" fill="#e6cfa6"/>
<rect x="298.2" y="277.0" width="2.7" height="1" fill="#dcbc8c"/>
<rect x="317.8" y="279.1" width="2.3" height="1" fill="#8a5e32"/>
<rect x="276.2" y="279.9" width="1.1" height="1" fill="#8a5e32"/>
<rect x="319.7" y="276.5" width="1.5" height="1" fill="#8a5e32"/>
<rect x="396.3" y="277.1" width="1.5" height="1" fill="#9a6c3c"/>
<rect x="440.0" y="278.6" width="1.9" height="1" fill="#8a5e32"/>
<rect x="433.2" y="280.4" width="2.1" height="1" fill="#9a6c3c"/>
<rect x="329.0" y="278.8" width="1.1" height="1" fill="#e6cfa6"/>
<rect x="260.5" y="276.6" width="2.6" height="1" fill="#dcbc8c"/>
<rect x="337.2" y="276.4" width="2.0" height="1" fill="#8a5e32"/>
<rect x="395.2" y="277.4" width="2.0" height="1" fill="#dcbc8c"/>
<rect x="328.7" y="277.0" width="2.7" height="1" fill="#8a5e32"/>
<rect x="241.0" y="277.5" width="1.9" height="1" fill="#e6cfa6"/>
<rect x="265.5" y="278.4" width="2.8" height="1" fill="#dcbc8c"/>
<rect x="450.8" y="280.6" width="2.9" height="1" fill="#dcbc8c"/>
<rect x="442.8" y="278.1" width="3.1" height="1" fill="#9a6c3c"/>
<rect x="342.5" y="278.6" width="1.8" height="1" fill="#dcbc8c"/>
<rect x="284.7" y="278.2" width="3.0" height="1" fill="#dcbc8c"/>
<rect x="395.8" y="280.3" width="2.1" height="1" fill="#e6cfa6"/>
<rect x="247.7" y="278.5" width="2.2" height="1" fill="#8a5e32"/>
<rect x="444.5" y="276.2" width="3.2" height="1" fill="#9a6c3c"/>
<rect x="301.4" y="280.5" width="1.8" height="1" fill="#e6cfa6"/>
</g>
<g transform="matrix(1 0.02842 0 1 0 -6.081)">
<rect x="217.23000000000002" y="280.6" width="239.3" height="2.2" fill="#94683a"/>
<rect x="217.23000000000002" y="282.8" width="239.3" height="4" fill="#b4895a"/>
<rect x="217.23000000000002" y="294.6" width="239.3" height="5" fill="#a57848"/>
<rect x="219.2" y="283.6" width="34" height="15" fill="#b88d5c"/>
<ellipse cx="232.8" cy="290.6" rx="14.3" ry="7" fill="url(#blk)"/>
<rect x="250.2" y="283.6" width="2.2" height="15" fill="#8e6234" opacity="0.8"/>
<rect x="309.2" y="283.6" width="34" height="15" fill="#b88d5c"/>
<ellipse cx="322.8" cy="290.6" rx="14.3" ry="7" fill="url(#blk)"/>
<rect x="340.2" y="283.6" width="2.2" height="15" fill="#8e6234" opacity="0.8"/>
<rect x="413.2" y="283.6" width="36" height="15" fill="#b88d5c"/>
<ellipse cx="427.6" cy="290.6" rx="15.1" ry="7" fill="url(#blk)"/>
<rect x="446.2" y="283.6" width="2.2" height="15" fill="#8e6234" opacity="0.8"/>
<rect x="254.2" y="288.6" width="54.0" height="1.3" fill="#caa374"/>
<rect x="254.2" y="296.1" width="54.0" height="1.3" fill="#c9a272"/>
<rect x="254.2" y="291.6" width="54.0" height="1" fill="#9c6e3e" opacity="0.7"/>
<rect x="344.2" y="288.6" width="68.0" height="1.3" fill="#caa374"/>
<rect x="344.2" y="296.1" width="68.0" height="1.3" fill="#c9a272"/>
<rect x="344.2" y="291.6" width="68.0" height="1" fill="#9c6e3e" opacity="0.7"/>
<rect x="217.2" y="300.1" width="239.3" height="1.4" fill="#8d6134"/>
<rect x="217.2" y="302.1" width="239.3" height="4" fill="#c29d6f"/>
<rect x="334.5" y="302.7" width="1.6" height="1" fill="#dcbc8c"/>
<rect x="417.1" y="304.4" width="2.8" height="1" fill="#9a6c3c"/>
<rect x="291.8" y="302.8" width="2.8" height="1" fill="#9a6c3c"/>
<rect x="390.2" y="303.2" width="1.1" height="1" fill="#e6cfa6"/>
<rect x="367.4" y="304.7" width="3.0" height="1" fill="#8a5e32"/>
<rect x="445.4" y="305.0" width="2.9" height="1" fill="#9a6c3c"/>
<rect x="339.0" y="305.4" width="2.2" height="1" fill="#dcbc8c"/>
<rect x="221.2" y="301.8" width="2.1" height="1" fill="#e6cfa6"/>
<rect x="431.8" y="305.7" width="2.0" height="1" fill="#9a6c3c"/>
<rect x="306.0" y="304.5" width="1.6" height="1" fill="#e6cfa6"/>
<rect x="380.8" y="306.1" width="2.2" height="1" fill="#9a6c3c"/>
<rect x="402.5" y="303.6" width="1.6" height="1" fill="#dcbc8c"/>
<rect x="325.5" y="306.0" width="1.3" height="1" fill="#dcbc8c"/>
<rect x="250.6" y="301.8" width="2.1" height="1" fill="#8a5e32"/>
<rect x="415.3" y="305.8" width="2.3" height="1" fill="#e6cfa6"/>
<rect x="293.0" y="304.3" width="1.3" height="1" fill="#8a5e32"/>
<rect x="284.2" y="304.8" width="3.0" height="1" fill="#e6cfa6"/>
<rect x="321.4" y="302.0" width="1.1" height="1" fill="#9a6c3c"/>
<rect x="431.5" y="306.0" width="2.4" height="1" fill="#8a5e32"/>
<rect x="291.7" y="303.2" width="2.4" height="1" fill="#9a6c3c"/>
<rect x="292.9" y="302.9" width="3.1" height="1" fill="#dcbc8c"/>
<rect x="293.2" y="303.4" width="1.6" height="1" fill="#8a5e32"/>
<rect x="317.1" y="303.5" width="3.0" height="1" fill="#9a6c3c"/>
<rect x="272.2" y="302.5" width="1.2" height="1" fill="#e6cfa6"/>
<rect x="395.0" y="305.4" width="2.4" height="1" fill="#e6cfa6"/>
<rect x="442.7" y="306.0" width="2.5" height="1" fill="#9a6c3c"/>
<rect x="281.3" y="303.8" width="1.6" height="1" fill="#e6cfa6"/>
<rect x="259.0" y="303.8" width="1.4" height="1" fill="#8a5e32"/>
<rect x="433.9" y="302.4" width="3.2" height="1" fill="#9a6c3c"/>
<rect x="372.0" y="302.3" width="1.1" height="1" fill="#8a5e32"/>
<rect x="291.6" y="304.6" width="1.3" height="1" fill="#8a5e32"/>
<rect x="228.9" y="306.0" width="2.2" height="1" fill="#9a6c3c"/>
<rect x="403.6" y="303.6" width="1.4" height="1" fill="#e6cfa6"/>
<rect x="284.4" y="302.2" width="1.3" height="1" fill="#8a5e32"/>
<rect x="309.0" y="305.9" width="2.3" height="1" fill="#8a5e32"/>
<rect x="219.0" y="303.3" width="1.3" height="1" fill="#9a6c3c"/>
<rect x="276.1" y="303.2" width="3.1" height="1" fill="#9a6c3c"/>
<rect x="242.1" y="305.5" width="2.0" height="1" fill="#dcbc8c"/>
<rect x="344.3" y="305.5" width="2.0" height="1" fill="#9a6c3c"/>
<rect x="328.3" y="304.1" width="2.0" height="1" fill="#9a6c3c"/>
<rect x="416.5" y="302.5" width="2.3" height="1" fill="#8a5e32"/>
<rect x="289.2" y="305.5" width="3.1" height="1" fill="#dcbc8c"/>
<rect x="280.8" y="302.6" width="1.1" height="1" fill="#e6cfa6"/>
<rect x="315.2" y="305.6" width="1.3" height="1" fill="#e6cfa6"/>
<rect x="255.0" y="302.2" width="1.9" height="1" fill="#dcbc8c"/>
<rect x="342.9" y="305.1" width="1.2" height="1" fill="#9a6c3c"/>
<rect x="295.2" y="304.3" width="1.5" height="1" fill="#9a6c3c"/>
<rect x="338.4" y="303.3" width="1.7" height="1" fill="#dcbc8c"/>
<rect x="385.3" y="305.1" width="2.6" height="1" fill="#dcbc8c"/>
<rect x="423.5" y="305.4" width="1.6" height="1" fill="#dcbc8c"/>
<rect x="281.8" y="302.2" width="2.1" height="1" fill="#dcbc8c"/>
<rect x="391.6" y="302.8" width="2.0" height="1" fill="#dcbc8c"/>
<rect x="325.6" y="303.8" width="2.2" height="1" fill="#8a5e32"/>
<rect x="453.3" y="304.0" width="2.0" height="1" fill="#e6cfa6"/>
<rect x="233.8" y="303.6" width="2.9" height="1" fill="#dcbc8c"/>
<rect x="231.4" y="305.5" width="1.8" height="1" fill="#e6cfa6"/>
<rect x="305.0" y="302.6" width="2.2" height="1" fill="#e6cfa6"/>
<rect x="320.4" y="305.5" width="2.6" height="1" fill="#dcbc8c"/>
<rect x="220.1" y="303.3" width="1.8" height="1" fill="#9a6c3c"/>
<rect x="306.4" y="304.6" width="2.9" height="1" fill="#9a6c3c"/>
<rect x="252.2" y="302.6" width="1.8" height="1" fill="#e6cfa6"/>
<rect x="250.6" y="302.0" width="1.7" height="1" fill="#dcbc8c"/>
<rect x="264.3" y="301.8" width="2.6" height="1" fill="#dcbc8c"/>
<rect x="345.1" y="305.0" width="2.8" height="1" fill="#8a5e32"/>
<rect x="322.8" y="304.7" width="1.3" height="1" fill="#9a6c3c"/>
<rect x="271.0" y="302.3" width="1.7" height="1" fill="#8a5e32"/>
<rect x="245.3" y="302.4" width="2.9" height="1" fill="#9a6c3c"/>
<rect x="223.9" y="303.2" width="1.0" height="1" fill="#8a5e32"/>
<rect x="330.3" y="302.3" width="1.4" height="1" fill="#9a6c3c"/>
<rect x="357.5" y="305.9" width="1.7" height="1" fill="#dcbc8c"/>
</g>
<g transform="matrix(1 0.03558 0 1 0 -7.615)">
<rect x="218.34" y="306.1" width="238.2" height="2.2" fill="#94683a"/>
<rect x="218.34" y="308.3" width="238.2" height="4" fill="#b4895a"/>
<rect x="218.34" y="320.1" width="238.2" height="5" fill="#a57848"/>
<rect x="220.3" y="309.1" width="34" height="15" fill="#b88d5c"/>
<ellipse cx="233.9" cy="316.1" rx="14.3" ry="7" fill="url(#blk)"/>
<rect x="251.3" y="309.1" width="2.2" height="15" fill="#8e6234" opacity="0.8"/>
<rect x="310.3" y="309.1" width="34" height="15" fill="#b88d5c"/>
<ellipse cx="323.9" cy="316.1" rx="14.3" ry="7" fill="url(#blk)"/>
<rect x="341.3" y="309.1" width="2.2" height="15" fill="#8e6234" opacity="0.8"/>
<rect x="414.3" y="309.1" width="36" height="15" fill="#b88d5c"/>
<ellipse cx="428.7" cy="316.1" rx="15.1" ry="7" fill="url(#blk)"/>
<rect x="447.3" y="309.1" width="2.2" height="15" fill="#8e6234" opacity="0.8"/>
<rect x="255.3" y="314.1" width="54.0" height="1.3" fill="#caa374"/>
<rect x="255.3" y="321.6" width="54.0" height="1.3" fill="#c9a272"/>
<rect x="255.3" y="317.1" width="54.0" height="1" fill="#9c6e3e" opacity="0.7"/>
<rect x="345.3" y="314.1" width="68.0" height="1.3" fill="#caa374"/>
<rect x="345.3" y="321.6" width="68.0" height="1.3" fill="#c9a272"/>
<rect x="345.3" y="317.1" width="68.0" height="1" fill="#9c6e3e" opacity="0.7"/>
<rect x="218.3" y="325.6" width="238.2" height="1.4" fill="#8d6134"/>
<rect x="218.3" y="327.6" width="238.2" height="4" fill="#c29d6f"/>
<rect x="241.5" y="331.5" width="2.5" height="1" fill="#e6cfa6"/>
<rect x="233.7" y="331.1" width="2.6" height="1" fill="#dcbc8c"/>
<rect x="234.1" y="327.2" width="2.1" height="1" fill="#9a6c3c"/>
<rect x="368.7" y="327.5" width="2.5" height="1" fill="#9a6c3c"/>
<rect x="428.3" y="328.1" width="1.7" height="1" fill="#9a6c3c"/>
<rect x="446.5" y="327.4" width="2.1" height="1" fill="#8a5e32"/>
<rect x="355.0" y="327.5" width="1.5" height="1" fill="#9a6c3c"/>
<rect x="414.7" y="331.3" width="1.9" height="1" fill="#dcbc8c"/>
<rect x="452.2" y="330.1" width="2.2" height="1" fill="#8a5e32"/>
<rect x="354.8" y="328.7" width="2.3" height="1" fill="#dcbc8c"/>
<rect x="366.0" y="328.7" width="2.7" height="1" fill="#8a5e32"/>
<rect x="324.8" y="330.4" width="2.9" height="1" fill="#8a5e32"/>
<rect x="335.9" y="331.0" width="1.4" height="1" fill="#e6cfa6"/>
<rect x="441.6" y="327.7" width="3.0" height="1" fill="#9a6c3c"/>
<rect x="418.9" y="328.5" width="2.7" height="1" fill="#dcbc8c"/>
<rect x="337.1" y="328.8" width="2.9" height="1" fill="#e6cfa6"/>
<rect x="274.7" y="328.8" width="1.5" height="1" fill="#dcbc8c"/>
<rect x="278.0" y="328.3" width="2.5" height="1" fill="#dcbc8c"/>
<rect x="392.7" y="328.1" width="1.7" height="1" fill="#8a5e32"/>
<rect x="352.9" y="328.2" width="2.5" height="1" fill="#8a5e32"/>
<rect x="411.4" y="328.8" width="1.5" height="1" fill="#9a6c3c"/>
<rect x="360.9" y="329.0" width="1.4" height="1" fill="#dcbc8c"/>
<rect x="323.7" y="327.4" width="2.7" height="1" fill="#9a6c3c"/>
<rect x="335.1" y="329.7" width="1.6" height="1" fill="#9a6c3c"/>
<rect x="381.6" y="328.1" width="2.8" height="1" fill="#9a6c3c"/>
<rect x="300.7" y="331.6" width="2.1" height="1" fill="#8a5e32"/>
<rect x="245.7" y="329.0" width="2.9" height="1" fill="#8a5e32"/>
<rect x="357.3" y="327.6" width="2.2" height="1" fill="#dcbc8c"/>
<rect x="332.1" y="329.5" width="2.9" height="1" fill="#9a6c3c"/>
<rect x="307.6" y="327.3" width="1.8" height="1" fill="#8a5e32"/>
<rect x="366.8" y="330.3" width="3.1" height="1" fill="#dcbc8c"/>
<rect x="357.5" y="330.2" width="1.6" height="1" fill="#dcbc8c"/>
<rect x="453.7" y="330.9" width="2.6" height="1" fill="#dcbc8c"/>
<rect x="438.3" y="329.0" width="2.2" height="1" fill="#dcbc8c"/>
<rect x="319.0" y="328.8" width="1.4" height="1" fill="#dcbc8c"/>
<rect x="384.5" y="329.7" width="1.8" height="1" fill="#e6cfa6"/>
<rect x="295.5" y="327.8" width="3.0" height="1" fill="#9a6c3c"/>
<rect x="259.4" y="328.9" width="1.4" height="1" fill="#9a6c3c"/>
<rect x="350.0" y="328.8" width="2.6" height="1" fill="#9a6c3c"/>
<rect x="385.5" y="327.9" width="2.5" height="1" fill="#e6cfa6"/>
<rect x="242.3" y="329.5" width="3.0" height="1" fill="#dcbc8c"/>
<rect x="313.0" y="327.4" width="1.6" height="1" fill="#dcbc8c"/>
<rect x="273.2" y="328.3" width="1.5" height="1" fill="#e6cfa6"/>
<rect x="331.9" y="329.1" width="1.6" height="1" fill="#8a5e32"/>
<rect x="281.4" y="330.6" width="3.1" height="1" fill="#8a5e32"/>
<rect x="277.2" y="328.3" width="1.8" height="1" fill="#dcbc8c"/>
<rect x="433.4" y="327.6" width="2.5" height="1" fill="#e6cfa6"/>
<rect x="272.0" y="329.2" width="3.1" height="1" fill="#dcbc8c"/>
<rect x="415.7" y="327.8" width="1.1" height="1" fill="#9a6c3c"/>
<rect x="282.5" y="329.4" width="1.8" height="1" fill="#9a6c3c"/>
<rect x="395.7" y="329.4" width="2.5" height="1" fill="#9a6c3c"/>
<rect x="451.3" y="329.1" width="1.6" height="1" fill="#dcbc8c"/>
<rect x="357.8" y="328.9" width="1.1" height="1" fill="#8a5e32"/>
<rect x="321.1" y="327.1" width="2.7" height="1" fill="#8a5e32"/>
<rect x="338.6" y="331.4" width="2.9" height="1" fill="#dcbc8c"/>
<rect x="279.6" y="329.9" width="2.2" height="1" fill="#dcbc8c"/>
<rect x="266.6" y="327.8" width="3.2" height="1" fill="#e6cfa6"/>
<rect x="333.8" y="330.4" width="1.3" height="1" fill="#dcbc8c"/>
<rect x="377.6" y="329.8" width="1.4" height="1" fill="#8a5e32"/>
<rect x="239.0" y="327.5" width="2.5" height="1" fill="#e6cfa6"/>
<rect x="220.0" y="327.5" width="2.7" height="1" fill="#9a6c3c"/>
<rect x="387.0" y="329.6" width="2.5" height="1" fill="#9a6c3c"/>
<rect x="281.1" y="330.3" width="1.0" height="1" fill="#dcbc8c"/>
<rect x="380.9" y="329.0" width="1.0" height="1" fill="#dcbc8c"/>
<rect x="341.8" y="328.6" width="3.1" height="1" fill="#e6cfa6"/>
<rect x="228.9" y="328.1" width="1.0" height="1" fill="#9a6c3c"/>
<rect x="441.2" y="330.4" width="2.4" height="1" fill="#9a6c3c"/>
<rect x="326.1" y="330.7" width="1.8" height="1" fill="#8a5e32"/>
<rect x="255.9" y="328.9" width="1.9" height="1" fill="#e6cfa6"/>
<rect x="348.3" y="329.8" width="1.6" height="1" fill="#e6cfa6"/>
</g>
<g transform="matrix(1 0.04275 0 1 0 -9.148)">
<rect x="219.45000000000002" y="331.6" width="237.0" height="2.2" fill="#94683a"/>
<rect x="219.45000000000002" y="333.8" width="237.0" height="4" fill="#b4895a"/>
<rect x="219.45000000000002" y="345.6" width="237.0" height="5" fill="#a57848"/>
<rect x="221.5" y="334.6" width="34" height="15" fill="#b88d5c"/>
<ellipse cx="235.1" cy="341.6" rx="14.3" ry="7" fill="url(#blk)"/>
<rect x="252.5" y="334.6" width="2.2" height="15" fill="#8e6234" opacity="0.8"/>
<rect x="311.5" y="334.6" width="34" height="15" fill="#b88d5c"/>
<ellipse cx="325.1" cy="341.6" rx="14.3" ry="7" fill="url(#blk)"/>
<rect x="342.5" y="334.6" width="2.2" height="15" fill="#8e6234" opacity="0.8"/>
<rect x="415.5" y="334.6" width="36" height="15" fill="#b88d5c"/>
<ellipse cx="429.9" cy="341.6" rx="15.1" ry="7" fill="url(#blk)"/>
<rect x="448.5" y="334.6" width="2.2" height="15" fill="#8e6234" opacity="0.8"/>
<rect x="256.5" y="339.6" width="54.0" height="1.3" fill="#caa374"/>
<rect x="256.5" y="347.1" width="54.0" height="1.3" fill="#c9a272"/>
<rect x="256.5" y="342.6" width="54.0" height="1" fill="#9c6e3e" opacity="0.7"/>
<rect x="346.5" y="339.6" width="68.0" height="1.3" fill="#caa374"/>
<rect x="346.5" y="347.1" width="68.0" height="1.3" fill="#c9a272"/>
<rect x="346.5" y="342.6" width="68.0" height="1" fill="#9c6e3e" opacity="0.7"/>
<rect x="219.5" y="351.1" width="237.0" height="1.4" fill="#8d6134"/>
<rect x="219.5" y="353.1" width="237.0" height="4" fill="#c29d6f"/>
<rect x="315.7" y="355.2" width="1.5" height="1" fill="#9a6c3c"/>
<rect x="354.3" y="353.8" width="2.7" height="1" fill="#9a6c3c"/>
<rect x="376.5" y="355.9" width="2.1" height="1" fill="#9a6c3c"/>
<rect x="370.4" y="356.2" width="1.4" height="1" fill="#9a6c3c"/>
<rect x="338.0" y="353.0" width="3.0" height="1" fill="#8a5e32"/>
<rect x="323.4" y="353.2" width="3.2" height="1" fill="#8a5e32"/>
<rect x="273.0" y="355.0" width="1.6" height="1" fill="#e6cfa6"/>
<rect x="337.9" y="354.8" width="1.5" height="1" fill="#9a6c3c"/>
<rect x="224.3" y="352.7" width="2.4" height="1" fill="#e6cfa6"/>
<rect x="387.4" y="356.5" width="3.0" height="1" fill="#e6cfa6"/>
<rect x="301.1" y="353.9" width="2.8" height="1" fill="#9a6c3c"/>
<rect x="290.7" y="354.0" width="1.3" height="1" fill="#e6cfa6"/>
<rect x="315.6" y="355.5" width="1.3" height="1" fill="#8a5e32"/>
<rect x="275.7" y="353.3" width="1.9" height="1" fill="#8a5e32"/>
<rect x="368.9" y="353.0" width="2.5" height="1" fill="#e6cfa6"/>
<rect x="337.0" y="354.2" width="2.1" height="1" fill="#e6cfa6"/>
<rect x="319.4" y="355.8" width="2.2" height="1" fill="#9a6c3c"/>
<rect x="322.3" y="354.1" width="3.1" height="1" fill="#dcbc8c"/>
<rect x="291.9" y="355.9" width="1.6" height="1" fill="#9a6c3c"/>
<rect x="396.7" y="353.5" width="1.2" height="1" fill="#dcbc8c"/>
<rect x="395.7" y="356.9" width="2.0" height="1" fill="#8a5e32"/>
<rect x="390.1" y="355.3" width="2.5" height="1" fill="#e6cfa6"/>
<rect x="364.3" y="353.7" width="1.4" height="1" fill="#e6cfa6"/>
<rect x="374.5" y="356.7" width="2.0" height="1" fill="#9a6c3c"/>
<rect x="428.9" y="355.1" width="1.7" height="1" fill="#9a6c3c"/>
<rect x="413.6" y="354.2" width="2.8" height="1" fill="#9a6c3c"/>
<rect x="305.6" y="355.9" width="1.6" height="1" fill="#8a5e32"/>
<rect x="252.2" y="356.6" width="2.7" height="1" fill="#e6cfa6"/>
<rect x="371.7" y="355.9" width="1.2" height="1" fill="#9a6c3c"/>
<rect x="332.8" y="354.3" width="2.1" height="1" fill="#9a6c3c"/>
<rect x="364.7" y="354.7" width="1.1" height="1" fill="#8a5e32"/>
<rect x="436.4" y="353.5" width="3.0" height="1" fill="#e6cfa6"/>
<rect x="451.6" y="353.2" width="2.7" height="1" fill="#e6cfa6"/>
<rect x="248.4" y="355.3" width="3.1" height="1" fill="#dcbc8c"/>
<rect x="349.7" y="353.2" width="1.9" height="1" fill="#8a5e32"/>
<rect x="256.8" y="355.7" width="2.4" height="1" fill="#9a6c3c"/>
<rect x="294.3" y="354.6" width="3.0" height="1" fill="#dcbc8c"/>
<rect x="349.8" y="355.3" width="1.8" height="1" fill="#9a6c3c"/>
<rect x="270.2" y="353.1" width="1.4" height="1" fill="#8a5e32"/>
<rect x="429.9" y="353.7" width="1.5" height="1" fill="#dcbc8c"/>
<rect x="273.8" y="356.7" width="1.7" height="1" fill="#dcbc8c"/>
<rect x="402.9" y="356.3" width="1.5" height="1" fill="#9a6c3c"/>
<rect x="219.8" y="355.5" width="2.8" height="1" fill="#8a5e32"/>
<rect x="440.8" y="356.0" width="2.8" height="1" fill="#e6cfa6"/>
<rect x="407.0" y="354.1" width="1.6" height="1" fill="#dcbc8c"/>
<rect x="449.0" y="356.7" width="3.0" height="1" fill="#e6cfa6"/>
<rect x="327.1" y="353.7" width="2.2" height="1" fill="#9a6c3c"/>
<rect x="282.4" y="353.9" width="3.1" height="1" fill="#8a5e32"/>
<rect x="326.4" y="353.5" width="1.8" height="1" fill="#e6cfa6"/>
<rect x="244.7" y="356.6" width="1.9" height="1" fill="#dcbc8c"/>
<rect x="407.9" y="356.1" width="1.5" height="1" fill="#e6cfa6"/>
<rect x="363.6" y="353.1" width="1.4" height="1" fill="#dcbc8c"/>
<rect x="300.9" y="353.4" width="1.7" height="1" fill="#e6cfa6"/>
<rect x="404.2" y="355.3" width="1.1" height="1" fill="#dcbc8c"/>
<rect x="351.3" y="352.7" width="2.0" height="1" fill="#9a6c3c"/>
<rect x="456.1" y="353.4" width="1.0" height="1" fill="#8a5e32"/>
<rect x="307.0" y="356.4" width="1.6" height="1" fill="#8a5e32"/>
<rect x="420.0" y="354.3" width="1.8" height="1" fill="#dcbc8c"/>
<rect x="392.9" y="356.8" width="1.7" height="1" fill="#9a6c3c"/>
<rect x="346.4" y="352.6" width="1.2" height="1" fill="#dcbc8c"/>
<rect x="263.6" y="357.0" width="1.3" height="1" fill="#8a5e32"/>
<rect x="260.9" y="356.2" width="1.6" height="1" fill="#e6cfa6"/>
<rect x="305.4" y="352.6" width="1.5" height="1" fill="#dcbc8c"/>
<rect x="427.3" y="357.0" width="1.1" height="1" fill="#9a6c3c"/>
<rect x="258.6" y="355.5" width="2.1" height="1" fill="#dcbc8c"/>
<rect x="395.8" y="356.2" width="3.2" height="1" fill="#9a6c3c"/>
<rect x="426.9" y="355.1" width="1.2" height="1" fill="#e6cfa6"/>
<rect x="377.3" y="353.5" width="1.2" height="1" fill="#e6cfa6"/>
<rect x="376.5" y="352.7" width="1.5" height="1" fill="#9a6c3c"/>
<rect x="228.4" y="354.9" width="3.1" height="1" fill="#8a5e32"/>
</g>
<g transform="matrix(1 0.04992 0 1 0 -10.682)">
<rect x="220.56" y="357.1" width="235.9" height="2.2" fill="#94683a"/>
<rect x="220.56" y="359.3" width="235.9" height="4" fill="#b4895a"/>
<rect x="220.56" y="371.1" width="235.9" height="5" fill="#a57848"/>
<rect x="222.6" y="360.1" width="34" height="15" fill="#b88d5c"/>
<ellipse cx="236.2" cy="367.1" rx="14.3" ry="7" fill="url(#blk)"/>
<rect x="253.6" y="360.1" width="2.2" height="15" fill="#8e6234" opacity="0.8"/>
<rect x="312.6" y="360.1" width="34" height="15" fill="#b88d5c"/>
<ellipse cx="326.2" cy="367.1" rx="14.3" ry="7" fill="url(#blk)"/>
<rect x="343.6" y="360.1" width="2.2" height="15" fill="#8e6234" opacity="0.8"/>
<rect x="416.6" y="360.1" width="36" height="15" fill="#b88d5c"/>
<ellipse cx="431.0" cy="367.1" rx="15.1" ry="7" fill="url(#blk)"/>
<rect x="449.6" y="360.1" width="2.2" height="15" fill="#8e6234" opacity="0.8"/>
<rect x="257.6" y="365.1" width="54.0" height="1.3" fill="#caa374"/>
<rect x="257.6" y="372.6" width="54.0" height="1.3" fill="#c9a272"/>
<rect x="257.6" y="368.1" width="54.0" height="1" fill="#9c6e3e" opacity="0.7"/>
<rect x="347.6" y="365.1" width="68.0" height="1.3" fill="#caa374"/>
<rect x="347.6" y="372.6" width="68.0" height="1.3" fill="#c9a272"/>
<rect x="347.6" y="368.1" width="68.0" height="1" fill="#9c6e3e" opacity="0.7"/>
<rect x="220.6" y="376.6" width="235.9" height="1.4" fill="#8d6134"/>
<rect x="220.6" y="378.6" width="235.9" height="4" fill="#c29d6f"/>
<rect x="297.5" y="380.1" width="3.2" height="1" fill="#dcbc8c"/>
<rect x="401.4" y="381.2" width="1.0" height="1" fill="#8a5e32"/>
<rect x="386.2" y="381.0" width="1.0" height="1" fill="#9a6c3c"/>
<rect x="250.8" y="381.9" width="2.0" height="1" fill="#9a6c3c"/>
<rect x="378.5" y="378.7" width="2.6" height="1" fill="#dcbc8c"/>
<rect x="423.4" y="379.3" width="1.5" height="1" fill="#8a5e32"/>
<rect x="349.1" y="379.6" width="2.8" height="1" fill="#8a5e32"/>
<rect x="343.4" y="381.2" width="1.7" height="1" fill="#dcbc8c"/>
<rect x="301.9" y="381.5" width="1.4" height="1" fill="#dcbc8c"/>
<rect x="237.9" y="382.3" width="2.6" height="1" fill="#9a6c3c"/>
<rect x="316.0" y="382.4" width="1.9" height="1" fill="#8a5e32"/>
<rect x="438.0" y="380.9" width="1.0" height="1" fill="#dcbc8c"/>
<rect x="324.5" y="378.3" width="2.4" height="1" fill="#dcbc8c"/>
<rect x="366.3" y="380.3" width="2.2" height="1" fill="#9a6c3c"/>
<rect x="403.9" y="381.4" width="2.9" height="1" fill="#dcbc8c"/>
<rect x="241.1" y="381.2" width="2.8" height="1" fill="#9a6c3c"/>
<rect x="313.9" y="378.8" width="2.9" height="1" fill="#8a5e32"/>
<rect x="447.0" y="382.2" width="1.6" height="1" fill="#8a5e32"/>
<rect x="441.6" y="380.9" width="1.5" height="1" fill="#e6cfa6"/>
<rect x="288.9" y="381.0" width="2.8" height="1" fill="#e6cfa6"/>
<rect x="220.9" y="380.1" width="2.1" height="1" fill="#e6cfa6"/>
<rect x="435.8" y="380.9" width="2.7" height="1" fill="#8a5e32"/>
<rect x="368.1" y="380.7" width="2.1" height="1" fill="#9a6c3c"/>
<rect x="301.5" y="378.4" width="2.2" height="1" fill="#dcbc8c"/>
<rect x="428.1" y="378.4" width="2.8" height="1" fill="#8a5e32"/>
<rect x="229.5" y="378.8" width="1.2" height="1" fill="#dcbc8c"/>
<rect x="357.6" y="379.2" width="2.6" height="1" fill="#e6cfa6"/>
<rect x="223.2" y="380.5" width="2.5" height="1" fill="#dcbc8c"/>
<rect x="254.0" y="379.4" width="1.5" height="1" fill="#dcbc8c"/>
<rect x="357.3" y="378.8" width="1.9" height="1" fill="#9a6c3c"/>
<rect x="234.2" y="382.2" width="2.9" height="1" fill="#e6cfa6"/>
<rect x="450.6" y="379.3" width="1.7" height="1" fill="#e6cfa6"/>
<rect x="222.5" y="382.4" width="2.8" height="1" fill="#9a6c3c"/>
<rect x="396.1" y="379.9" width="2.9" height="1" fill="#8a5e32"/>
<rect x="382.6" y="381.9" width="1.1" height="1" fill="#dcbc8c"/>
<rect x="442.8" y="378.9" width="3.0" height="1" fill="#dcbc8c"/>
<rect x="428.0" y="381.4" width="3.0" height="1" fill="#dcbc8c"/>
<rect x="449.1" y="379.1" width="3.1" height="1" fill="#9a6c3c"/>
<rect x="307.8" y="379.7" width="2.4" height="1" fill="#8a5e32"/>
<rect x="306.3" y="381.4" width="1.5" height="1" fill="#8a5e32"/>
<rect x="335.1" y="379.0" width="2.3" height="1" fill="#9a6c3c"/>
<rect x="451.7" y="381.5" width="2.2" height="1" fill="#9a6c3c"/>
<rect x="429.1" y="378.8" width="2.8" height="1" fill="#dcbc8c"/>
<rect x="454.3" y="381.5" width="1.9" height="1" fill="#8a5e32"/>
<rect x="309.7" y="378.6" width="2.9" height="1" fill="#dcbc8c"/>
<rect x="415.4" y="379.7" width="1.7" height="1" fill="#9a6c3c"/>
<rect x="372.8" y="381.6" width="1.3" height="1" fill="#dcbc8c"/>
<rect x="342.5" y="379.4" width="3.2" height="1" fill="#dcbc8c"/>
<rect x="392.2" y="378.9" width="2.5" height="1" fill="#9a6c3c"/>
<rect x="374.6" y="379.0" width="2.6" height="1" fill="#8a5e32"/>
<rect x="308.6" y="380.7" width="2.0" height="1" fill="#e6cfa6"/>
<rect x="452.4" y="378.6" width="2.3" height="1" fill="#e6cfa6"/>
<rect x="375.6" y="380.7" width="2.9" height="1" fill="#e6cfa6"/>
<rect x="445.7" y="381.8" width="2.2" height="1" fill="#dcbc8c"/>
<rect x="294.1" y="379.7" width="2.6" height="1" fill="#8a5e32"/>
<rect x="281.4" y="382.3" width="2.8" height="1" fill="#9a6c3c"/>
<rect x="402.0" y="381.1" width="1.6" height="1" fill="#8a5e32"/>
<rect x="258.7" y="381.9" width="2.7" height="1" fill="#9a6c3c"/>
<rect x="240.2" y="381.8" width="1.0" height="1" fill="#9a6c3c"/>
<rect x="426.1" y="380.6" width="2.0" height="1" fill="#e6cfa6"/>
<rect x="367.8" y="379.5" width="2.8" height="1" fill="#dcbc8c"/>
<rect x="370.6" y="380.7" width="2.9" height="1" fill="#9a6c3c"/>
<rect x="449.8" y="378.4" width="1.6" height="1" fill="#e6cfa6"/>
<rect x="283.1" y="378.4" width="1.5" height="1" fill="#dcbc8c"/>
<rect x="286.1" y="381.0" width="1.5" height="1" fill="#dcbc8c"/>
<rect x="424.6" y="378.3" width="1.2" height="1" fill="#e6cfa6"/>
<rect x="255.4" y="380.9" width="2.4" height="1" fill="#e6cfa6"/>
<rect x="267.9" y="378.8" width="2.7" height="1" fill="#8a5e32"/>
<rect x="313.7" y="380.3" width="1.1" height="1" fill="#e6cfa6"/>
<rect x="414.0" y="379.0" width="2.7" height="1" fill="#9a6c3c"/>
</g>
<g transform="matrix(1 0.05708 0 1 0 -12.216)">
<rect x="221.67000000000002" y="382.6" width="234.8" height="2.2" fill="#94683a"/>
<rect x="221.67000000000002" y="384.8" width="234.8" height="4" fill="#b4895a"/>
<rect x="221.67000000000002" y="396.6" width="234.8" height="5" fill="#a57848"/>
<rect x="223.7" y="385.6" width="34" height="15" fill="#b88d5c"/>
<ellipse cx="237.3" cy="392.6" rx="14.3" ry="7" fill="url(#blk)"/>
<rect x="254.7" y="385.6" width="2.2" height="15" fill="#8e6234" opacity="0.8"/>
<rect x="313.7" y="385.6" width="34" height="15" fill="#b88d5c"/>
<ellipse cx="327.3" cy="392.6" rx="14.3" ry="7" fill="url(#blk)"/>
<rect x="344.7" y="385.6" width="2.2" height="15" fill="#8e6234" opacity="0.8"/>
<rect x="417.7" y="385.6" width="36" height="15" fill="#b88d5c"/>
<ellipse cx="432.1" cy="392.6" rx="15.1" ry="7" fill="url(#blk)"/>
<rect x="450.7" y="385.6" width="2.2" height="15" fill="#8e6234" opacity="0.8"/>
<rect x="258.7" y="390.6" width="54.0" height="1.3" fill="#caa374"/>
<rect x="258.7" y="398.1" width="54.0" height="1.3" fill="#c9a272"/>
<rect x="258.7" y="393.6" width="54.0" height="1" fill="#9c6e3e" opacity="0.7"/>
<rect x="348.7" y="390.6" width="68.0" height="1.3" fill="#caa374"/>
<rect x="348.7" y="398.1" width="68.0" height="1.3" fill="#c9a272"/>
<rect x="348.7" y="393.6" width="68.0" height="1" fill="#9c6e3e" opacity="0.7"/>
<rect x="221.7" y="402.1" width="234.8" height="1.4" fill="#8d6134"/>
<rect x="221.7" y="404.1" width="234.8" height="4" fill="#c29d6f"/>
<rect x="404.9" y="404.1" width="1.2" height="1" fill="#e6cfa6"/>
<rect x="353.4" y="404.9" width="2.8" height="1" fill="#8a5e32"/>
<rect x="264.7" y="404.4" width="2.5" height="1" fill="#e6cfa6"/>
<rect x="429.4" y="405.8" width="1.3" height="1" fill="#8a5e32"/>
<rect x="274.6" y="405.7" width="1.9" height="1" fill="#e6cfa6"/>
<rect x="429.3" y="404.6" width="1.7" height="1" fill="#dcbc8c"/>
<rect x="428.3" y="406.4" width="1.4" height="1" fill="#e6cfa6"/>
<rect x="327.0" y="407.0" width="1.5" height="1" fill="#e6cfa6"/>
<rect x="422.7" y="407.3" width="2.2" height="1" fill="#dcbc8c"/>
<rect x="385.5" y="406.1" width="1.9" height="1" fill="#e6cfa6"/>
<rect x="290.9" y="405.5" width="2.1" height="1" fill="#8a5e32"/>
<rect x="250.1" y="407.9" width="2.3" height="1" fill="#8a5e32"/>
<rect x="274.8" y="407.5" width="3.1" height="1" fill="#dcbc8c"/>
<rect x="244.6" y="405.7" width="2.9" height="1" fill="#9a6c3c"/>
<rect x="227.9" y="405.3" width="2.8" height="1" fill="#9a6c3c"/>
<rect x="425.2" y="404.3" width="1.2" height="1" fill="#9a6c3c"/>
<rect x="228.7" y="407.9" width="1.5" height="1" fill="#dcbc8c"/>
<rect x="332.1" y="406.7" width="1.6" height="1" fill="#e6cfa6"/>
<rect x="409.7" y="405.2" width="2.3" height="1" fill="#e6cfa6"/>
<rect x="442.7" y="405.0" width="1.1" height="1" fill="#dcbc8c"/>
<rect x="249.7" y="407.4" width="2.5" height="1" fill="#9a6c3c"/>
<rect x="369.9" y="407.4" width="2.8" height="1" fill="#9a6c3c"/>
<rect x="233.4" y="405.1" width="2.9" height="1" fill="#dcbc8c"/>
<rect x="269.6" y="406.9" width="1.7" height="1" fill="#dcbc8c"/>
<rect x="350.0" y="406.4" width="1.3" height="1" fill="#dcbc8c"/>
<rect x="241.1" y="406.2" width="2.1" height="1" fill="#e6cfa6"/>
<rect x="313.0" y="407.9" width="2.4" height="1" fill="#dcbc8c"/>
<rect x="382.0" y="404.4" width="2.1" height="1" fill="#9a6c3c"/>
<rect x="330.5" y="406.5" width="3.0" height="1" fill="#8a5e32"/>
<rect x="257.6" y="406.6" width="2.5" height="1" fill="#e6cfa6"/>
<rect x="278.3" y="405.8" width="2.0" height="1" fill="#9a6c3c"/>
<rect x="360.6" y="405.4" width="2.0" height="1" fill="#dcbc8c"/>
<rect x="453.0" y="406.0" width="2.7" height="1" fill="#dcbc8c"/>
<rect x="240.1" y="407.3" width="2.4" height="1" fill="#dcbc8c"/>
<rect x="428.2" y="403.9" width="3.1" height="1" fill="#9a6c3c"/>
<rect x="282.7" y="405.6" width="1.2" height="1" fill="#8a5e32"/>
<rect x="328.3" y="406.1" width="2.3" height="1" fill="#9a6c3c"/>
<rect x="259.8" y="404.0" width="1.8" height="1" fill="#9a6c3c"/>
<rect x="271.3" y="405.5" width="1.0" height="1" fill="#dcbc8c"/>
<rect x="381.0" y="404.9" width="1.3" height="1" fill="#8a5e32"/>
<rect x="391.4" y="403.7" width="1.9" height="1" fill="#9a6c3c"/>
<rect x="365.5" y="405.2" width="3.0" height="1" fill="#e6cfa6"/>
<rect x="257.8" y="403.6" width="3.1" height="1" fill="#9a6c3c"/>
<rect x="327.4" y="404.7" width="2.8" height="1" fill="#8a5e32"/>
<rect x="373.0" y="404.1" width="2.3" height="1" fill="#dcbc8c"/>
<rect x="368.6" y="405.0" width="2.4" height="1" fill="#dcbc8c"/>
<rect x="336.9" y="406.9" width="1.4" height="1" fill="#e6cfa6"/>
<rect x="428.3" y="407.8" width="1.0" height="1" fill="#8a5e32"/>
<rect x="413.7" y="406.2" width="1.2" height="1" fill="#9a6c3c"/>
<rect x="223.5" y="407.4" width="1.7" height="1" fill="#8a5e32"/>
<rect x="378.1" y="404.7" width="2.0" height="1" fill="#e6cfa6"/>
<rect x="237.7" y="407.5" width="1.5" height="1" fill="#e6cfa6"/>
<rect x="279.7" y="405.0" width="2.0" height="1" fill="#e6cfa6"/>
<rect x="318.7" y="407.8" width="1.7" height="1" fill="#9a6c3c"/>
<rect x="375.3" y="406.7" width="1.8" height="1" fill="#dcbc8c"/>
<rect x="261.9" y="407.8" width="1.8" height="1" fill="#dcbc8c"/>
<rect x="432.8" y="407.6" width="1.4" height="1" fill="#e6cfa6"/>
<rect x="302.0" y="404.4" width="1.5" height="1" fill="#8a5e32"/>
<rect x="332.0" y="404.9" width="2.0" height="1" fill="#dcbc8c"/>
<rect x="339.6" y="405.3" width="1.4" height="1" fill="#e6cfa6"/>
<rect x="432.3" y="406.1" width="1.6" height="1" fill="#8a5e32"/>
<rect x="262.4" y="407.9" width="2.6" height="1" fill="#e6cfa6"/>
<rect x="386.8" y="407.4" width="1.4" height="1" fill="#dcbc8c"/>
<rect x="407.7" y="407.0" width="1.2" height="1" fill="#8a5e32"/>
<rect x="315.6" y="403.6" width="2.7" height="1" fill="#dcbc8c"/>
<rect x="232.8" y="405.6" width="3.0" height="1" fill="#dcbc8c"/>
<rect x="347.9" y="405.1" width="2.3" height="1" fill="#e6cfa6"/>
<rect x="423.3" y="406.7" width="1.4" height="1" fill="#dcbc8c"/>
<rect x="357.5" y="405.7" width="2.2" height="1" fill="#dcbc8c"/>
<rect x="388.6" y="406.7" width="3.1" height="1" fill="#e6cfa6"/>
</g>
<g transform="matrix(1 0.06425 0 1 0 -13.750)">
<rect x="222.78" y="408.0" width="233.7" height="2.2" fill="#94683a"/>
<rect x="222.78" y="410.2" width="233.7" height="4" fill="#b4895a"/>
<rect x="222.78" y="422.0" width="233.7" height="5" fill="#a57848"/>
<rect x="224.8" y="411.0" width="34" height="15" fill="#b88d5c"/>
<ellipse cx="238.4" cy="418.0" rx="14.3" ry="7" fill="url(#blk)"/>
<rect x="255.8" y="411.0" width="2.2" height="15" fill="#8e6234" opacity="0.8"/>
<rect x="314.8" y="411.0" width="34" height="15" fill="#b88d5c"/>
<ellipse cx="328.4" cy="418.0" rx="14.3" ry="7" fill="url(#blk)"/>
<rect x="345.8" y="411.0" width="2.2" height="15" fill="#8e6234" opacity="0.8"/>
<rect x="418.8" y="411.0" width="36" height="15" fill="#b88d5c"/>
<ellipse cx="433.2" cy="418.0" rx="15.1" ry="7" fill="url(#blk)"/>
<rect x="451.8" y="411.0" width="2.2" height="15" fill="#8e6234" opacity="0.8"/>
<rect x="259.8" y="416.0" width="54.0" height="1.3" fill="#caa374"/>
<rect x="259.8" y="423.5" width="54.0" height="1.3" fill="#c9a272"/>
<rect x="259.8" y="419.0" width="54.0" height="1" fill="#9c6e3e" opacity="0.7"/>
<rect x="349.8" y="416.0" width="68.0" height="1.3" fill="#caa374"/>
<rect x="349.8" y="423.5" width="68.0" height="1.3" fill="#c9a272"/>
<rect x="349.8" y="419.0" width="68.0" height="1" fill="#9c6e3e" opacity="0.7"/>
<rect x="222.8" y="427.5" width="233.7" height="1.4" fill="#8d6134"/>
<rect x="222.8" y="429.5" width="233.7" height="4" fill="#c29d6f"/>
<rect x="334.1" y="429.6" width="2.1" height="1" fill="#8a5e32"/>
<rect x="302.1" y="429.7" width="1.7" height="1" fill="#dcbc8c"/>
<rect x="223.5" y="430.1" width="1.8" height="1" fill="#dcbc8c"/>
<rect x="264.6" y="431.0" width="1.3" height="1" fill="#8a5e32"/>
<rect x="296.4" y="433.5" width="2.3" height="1" fill="#8a5e32"/>
<rect x="386.2" y="433.0" width="1.9" height="1" fill="#e6cfa6"/>
<rect x="407.6" y="430.1" width="3.2" height="1" fill="#e6cfa6"/>
<rect x="282.5" y="433.5" width="1.2" height="1" fill="#8a5e32"/>
<rect x="343.2" y="431.2" width="1.6" height="1" fill="#dcbc8c"/>
<rect x="288.8" y="430.3" width="2.8" height="1" fill="#e6cfa6"/>
<rect x="433.1" y="429.6" width="1.9" height="1" fill="#8a5e32"/>
<rect x="391.5" y="429.8" width="2.1" height="1" fill="#8a5e32"/>
<rect x="286.7" y="431.8" width="2.5" height="1" fill="#e6cfa6"/>
<rect x="314.8" y="429.1" width="2.8" height="1" fill="#dcbc8c"/>
<rect x="288.9" y="433.3" width="1.3" height="1" fill="#dcbc8c"/>
<rect x="226.9" y="432.4" width="1.4" height="1" fill="#8a5e32"/>
<rect x="364.8" y="429.4" width="1.0" height="1" fill="#9a6c3c"/>
<rect x="447.1" y="433.4" width="2.7" height="1" fill="#8a5e32"/>
<rect x="244.3" y="432.5" width="2.4" height="1" fill="#dcbc8c"/>
<rect x="228.8" y="431.7" width="2.2" height="1" fill="#9a6c3c"/>
<rect x="363.4" y="431.9" width="2.4" height="1" fill="#e6cfa6"/>
<rect x="397.0" y="431.3" width="2.5" height="1" fill="#8a5e32"/>
<rect x="446.8" y="432.4" width="1.8" height="1" fill="#e6cfa6"/>
<rect x="281.5" y="431.4" width="1.7" height="1" fill="#e6cfa6"/>
<rect x="229.6" y="431.5" width="1.3" height="1" fill="#e6cfa6"/>
<rect x="291.2" y="432.8" width="2.0" height="1" fill="#e6cfa6"/>
<rect x="342.9" y="430.4" width="1.8" height="1" fill="#dcbc8c"/>
<rect x="435.2" y="433.3" width="2.4" height="1" fill="#8a5e32"/>
<rect x="427.8" y="431.2" width="2.2" height="1" fill="#e6cfa6"/>
<rect x="371.9" y="429.1" width="2.1" height="1" fill="#9a6c3c"/>
<rect x="288.7" y="431.7" width="2.6" height="1" fill="#9a6c3c"/>
<rect x="286.3" y="431.1" width="2.4" height="1" fill="#e6cfa6"/>
<rect x="418.3" y="430.9" width="1.2" height="1" fill="#8a5e32"/>
<rect x="258.3" y="430.5" width="1.1" height="1" fill="#dcbc8c"/>
<rect x="340.2" y="432.5" width="1.6" height="1" fill="#dcbc8c"/>
<rect x="387.3" y="429.1" width="1.0" height="1" fill="#9a6c3c"/>
<rect x="243.6" y="431.7" width="1.7" height="1" fill="#9a6c3c"/>
<rect x="442.0" y="429.6" width="2.5" height="1" fill="#dcbc8c"/>
<rect x="415.5" y="429.8" width="1.3" height="1" fill="#8a5e32"/>
<rect x="352.6" y="432.1" width="2.4" height="1" fill="#9a6c3c"/>
<rect x="293.9" y="430.0" width="2.2" height="1" fill="#dcbc8c"/>
<rect x="305.3" y="432.9" width="2.9" height="1" fill="#8a5e32"/>
<rect x="310.3" y="430.7" width="1.6" height="1" fill="#dcbc8c"/>
<rect x="394.1" y="430.9" width="1.8" height="1" fill="#9a6c3c"/>
<rect x="245.6" y="433.0" width="1.9" height="1" fill="#9a6c3c"/>
<rect x="328.5" y="432.9" width="2.2" height="1" fill="#dcbc8c"/>
<rect x="291.2" y="431.1" width="1.1" height="1" fill="#dcbc8c"/>
<rect x="259.9" y="433.1" width="1.1" height="1" fill="#e6cfa6"/>
<rect x="421.0" y="430.7" width="2.2" height="1" fill="#dcbc8c"/>
<rect x="223.8" y="432.8" width="2.9" height="1" fill="#8a5e32"/>
<rect x="295.2" y="431.9" width="1.7" height="1" fill="#9a6c3c"/>
<rect x="277.0" y="432.7" width="1.9" height="1" fill="#dcbc8c"/>
<rect x="404.4" y="429.9" width="2.7" height="1" fill="#8a5e32"/>
<rect x="422.0" y="431.3" width="2.7" height="1" fill="#8a5e32"/>
<rect x="253.1" y="432.5" width="3.0" height="1" fill="#dcbc8c"/>
<rect x="394.2" y="431.1" width="2.4" height="1" fill="#8a5e32"/>
<rect x="341.6" y="431.2" width="1.3" height="1" fill="#9a6c3c"/>
<rect x="386.5" y="430.3" width="1.1" height="1" fill="#e6cfa6"/>
<rect x="431.0" y="429.4" width="1.5" height="1" fill="#9a6c3c"/>
<rect x="432.2" y="432.4" width="1.3" height="1" fill="#9a6c3c"/>
<rect x="443.7" y="432.1" width="2.6" height="1" fill="#e6cfa6"/>
<rect x="414.4" y="432.2" width="2.7" height="1" fill="#9a6c3c"/>
<rect x="300.4" y="431.7" width="1.3" height="1" fill="#dcbc8c"/>
<rect x="369.6" y="430.7" width="3.1" height="1" fill="#e6cfa6"/>
<rect x="353.6" y="432.9" width="2.6" height="1" fill="#e6cfa6"/>
<rect x="333.9" y="431.5" width="1.8" height="1" fill="#9a6c3c"/>
<rect x="376.2" y="432.7" width="1.0" height="1" fill="#dcbc8c"/>
<rect x="300.5" y="431.9" width="1.9" height="1" fill="#8a5e32"/>
<rect x="293.3" y="430.3" width="1.5" height="1" fill="#9a6c3c"/>
<rect x="249.0" y="431.3" width="2.8" height="1" fill="#8a5e32"/>
</g>
<g transform="matrix(1 0.07142 0 1 0 -15.283)">
<rect x="223.89000000000001" y="433.5" width="232.6" height="2.2" fill="#94683a"/>
<rect x="223.89000000000001" y="435.7" width="232.6" height="4" fill="#b4895a"/>
<rect x="223.89000000000001" y="447.5" width="232.6" height="5" fill="#a57848"/>
<rect x="225.9" y="436.5" width="34" height="15" fill="#b88d5c"/>
<ellipse cx="239.5" cy="443.5" rx="14.3" ry="7" fill="url(#blk)"/>
<rect x="256.9" y="436.5" width="2.2" height="15" fill="#8e6234" opacity="0.8"/>
<rect x="315.9" y="436.5" width="34" height="15" fill="#b88d5c"/>
<ellipse cx="329.5" cy="443.5" rx="14.3" ry="7" fill="url(#blk)"/>
<rect x="346.9" y="436.5" width="2.2" height="15" fill="#8e6234" opacity="0.8"/>
<rect x="419.9" y="436.5" width="36" height="15" fill="#b88d5c"/>
<ellipse cx="434.3" cy="443.5" rx="15.1" ry="7" fill="url(#blk)"/>
<rect x="452.9" y="436.5" width="2.2" height="15" fill="#8e6234" opacity="0.8"/>
<rect x="260.9" y="441.5" width="54.0" height="1.3" fill="#caa374"/>
<rect x="260.9" y="449.0" width="54.0" height="1.3" fill="#c9a272"/>
<rect x="260.9" y="444.5" width="54.0" height="1" fill="#9c6e3e" opacity="0.7"/>
<rect x="350.9" y="441.5" width="68.0" height="1.3" fill="#caa374"/>
<rect x="350.9" y="449.0" width="68.0" height="1.3" fill="#c9a272"/>
<rect x="350.9" y="444.5" width="68.0" height="1" fill="#9c6e3e" opacity="0.7"/>
<rect x="223.9" y="453.0" width="232.6" height="1.4" fill="#8d6134"/>
<rect x="223.9" y="455.0" width="232.6" height="4" fill="#c29d6f"/>
<rect x="310.5" y="457.2" width="2.9" height="1" fill="#dcbc8c"/>
<rect x="410.3" y="455.9" width="2.9" height="1" fill="#8a5e32"/>
<rect x="347.1" y="454.6" width="1.2" height="1" fill="#9a6c3c"/>
<rect x="349.6" y="455.0" width="2.3" height="1" fill="#8a5e32"/>
<rect x="353.2" y="456.7" width="1.9" height="1" fill="#dcbc8c"/>
<rect x="308.7" y="457.8" width="2.9" height="1" fill="#9a6c3c"/>
<rect x="241.3" y="458.8" width="1.9" height="1" fill="#8a5e32"/>
<rect x="399.6" y="456.3" width="1.4" height="1" fill="#e6cfa6"/>
<rect x="310.4" y="456.2" width="2.8" height="1" fill="#e6cfa6"/>
<rect x="303.4" y="455.0" width="2.2" height="1" fill="#9a6c3c"/>
<rect x="268.1" y="457.2" width="2.2" height="1" fill="#dcbc8c"/>
<rect x="322.6" y="458.9" width="2.5" height="1" fill="#9a6c3c"/>
<rect x="448.0" y="456.2" width="1.6" height="1" fill="#9a6c3c"/>
<rect x="339.3" y="457.3" width="1.6" height="1" fill="#e6cfa6"/>
<rect x="326.4" y="457.0" width="1.2" height="1" fill="#e6cfa6"/>
<rect x="452.1" y="456.2" width="3.2" height="1" fill="#dcbc8c"/>
<rect x="412.5" y="457.1" width="1.2" height="1" fill="#9a6c3c"/>
<rect x="411.2" y="457.1" width="2.2" height="1" fill="#dcbc8c"/>
<rect x="390.5" y="456.7" width="2.9" height="1" fill="#e6cfa6"/>
<rect x="226.1" y="455.4" width="2.4" height="1" fill="#9a6c3c"/>
<rect x="308.9" y="457.3" width="2.0" height="1" fill="#8a5e32"/>
<rect x="297.1" y="455.8" width="1.8" height="1" fill="#8a5e32"/>
<rect x="433.7" y="455.7" width="2.1" height="1" fill="#e6cfa6"/>
<rect x="418.1" y="457.3" width="1.9" height="1" fill="#dcbc8c"/>
<rect x="276.3" y="458.1" width="1.9" height="1" fill="#e6cfa6"/>
<rect x="233.2" y="457.6" width="2.8" height="1" fill="#e6cfa6"/>
<rect x="366.7" y="458.4" width="2.2" height="1" fill="#e6cfa6"/>
<rect x="241.4" y="457.2" width="2.6" height="1" fill="#8a5e32"/>
<rect x="333.6" y="458.4" width="2.5" height="1" fill="#9a6c3c"/>
<rect x="286.6" y="457.9" width="2.9" height="1" fill="#e6cfa6"/>
<rect x="260.7" y="456.9" width="2.2" height="1" fill="#e6cfa6"/>
<rect x="454.6" y="457.4" width="1.1" height="1" fill="#9a6c3c"/>
<rect x="230.0" y="456.7" width="1.3" height="1" fill="#dcbc8c"/>
<rect x="378.7" y="458.3" width="2.5" height="1" fill="#9a6c3c"/>
<rect x="419.3" y="455.8" width="2.1" height="1" fill="#dcbc8c"/>
<rect x="455.1" y="457.7" width="1.1" height="1" fill="#9a6c3c"/>
<rect x="356.4" y="455.0" width="2.2" height="1" fill="#8a5e32"/>
<rect x="229.0" y="458.2" width="1.4" height="1" fill="#e6cfa6"/>
<rect x="431.3" y="455.7" width="2.5" height="1" fill="#9a6c3c"/>
<rect x="280.2" y="456.9" width="2.4" height="1" fill="#dcbc8c"/>
<rect x="252.9" y="457.4" width="1.4" height="1" fill="#dcbc8c"/>
<rect x="367.0" y="458.3" width="1.0" height="1" fill="#dcbc8c"/>
<rect x="337.2" y="458.6" width="1.4" height="1" fill="#e6cfa6"/>
<rect x="333.5" y="455.4" width="2.0" height="1" fill="#9a6c3c"/>
<rect x="456.0" y="455.9" width="1.8" height="1" fill="#9a6c3c"/>
<rect x="449.3" y="455.5" width="1.8" height="1" fill="#8a5e32"/>
<rect x="243.2" y="454.9" width="1.1" height="1" fill="#9a6c3c"/>
<rect x="438.7" y="455.5" width="1.5" height="1" fill="#8a5e32"/>
<rect x="436.1" y="457.1" width="1.7" height="1" fill="#8a5e32"/>
<rect x="289.4" y="458.8" width="2.0" height="1" fill="#e6cfa6"/>
<rect x="453.2" y="455.4" width="2.6" height="1" fill="#dcbc8c"/>
<rect x="355.9" y="456.0" width="2.9" height="1" fill="#dcbc8c"/>
<rect x="311.5" y="454.7" width="2.5" height="1" fill="#e6cfa6"/>
<rect x="305.1" y="454.5" width="1.9" height="1" fill="#e6cfa6"/>
<rect x="264.6" y="457.3" width="1.3" height="1" fill="#dcbc8c"/>
<rect x="242.6" y="458.7" width="1.4" height="1" fill="#8a5e32"/>
<rect x="360.4" y="456.3" width="2.7" height="1" fill="#e6cfa6"/>
<rect x="288.8" y="457.9" width="2.7" height="1" fill="#dcbc8c"/>
<rect x="356.0" y="457.8" width="2.5" height="1" fill="#dcbc8c"/>
<rect x="379.1" y="457.7" width="2.0" height="1" fill="#8a5e32"/>
<rect x="297.0" y="457.0" width="2.3" height="1" fill="#9a6c3c"/>
<rect x="266.7" y="457.5" width="1.3" height="1" fill="#9a6c3c"/>
<rect x="295.1" y="455.2" width="2.7" height="1" fill="#8a5e32"/>
<rect x="277.3" y="458.6" width="2.0" height="1" fill="#8a5e32"/>
<rect x="233.4" y="458.4" width="1.5" height="1" fill="#dcbc8c"/>
<rect x="300.5" y="455.8" width="1.1" height="1" fill="#8a5e32"/>
<rect x="290.9" y="456.9" width="1.8" height="1" fill="#9a6c3c"/>
<rect x="311.2" y="457.6" width="2.6" height="1" fill="#9a6c3c"/>
<rect x="316.7" y="455.4" width="2.7" height="1" fill="#8a5e32"/>
<rect x="305.6" y="457.5" width="1.1" height="1" fill="#9a6c3c"/>
</g>
<filter id="nz" x="0" y="0" width="100%" height="100%"><feTurbulence type="fractalNoise" baseFrequency="0.9 0.35" numOctaves="2" seed="4"/><feColorMatrix type="matrix" values="0 0 0 0 0.55  0 0 0 0 0.38  0 0 0 0 0.2  1.6 0 0 0 -0.75"/></filter>
<filter id="nz2" x="0" y="0" width="100%" height="100%"><feTurbulence type="fractalNoise" baseFrequency="1.2 1.2" numOctaves="1" seed="9"/><feColorMatrix type="matrix" values="0 0 0 0 0.9  0 0 0 0 0.8  0 0 0 0 0.62  0 1.8 0 0 -1.05"/></filter>
<rect x="210" y="200" width="250" height="280" filter="url(#nz)" opacity="0.55"/>
<rect x="210" y="200" width="250" height="280" filter="url(#nz2)" opacity="0.5"/>
<rect x="375" y="209" width="16" height="16" fill="#ffff00"/>
<rect x="375" y="237.5" width="16" height="12" fill="#d4d4d4"/>
<rect x="375" y="263.5" width="16" height="11" fill="#d6d6d6"/>
<rect x="375" y="289.5" width="16" height="10" fill="#dadada"/>
<rect x="296.5" y="213" width="2" height="15" fill="#ffff00"/>
<rect x="297" y="240" width="1.5" height="11" fill="#2a4a6a"/>
<polygon points="255,446 307,449 307,459 255,456" fill="#e2e2de"/>
<polygon points="337,452.5 394,456 394,465.5 337,462" fill="#e2e2de"/>
<polygon points="277,447 296,448 296,458 277,457" fill="#ffff00"/>
<polygon points="337,452.5 348,453.2 348,462.7 337,462" fill="#ffff00"/>
</g>
<polygon points="210.0,409.0 223.0,404.0 223.0,424.0 210.0,429.0" fill="#4e4e4e" />
<polygon points="192.0,414.3 200.8,414.3 200.8,433.4 192.0,433.4" fill="#8c8c8c" />
<path d="M190.5 368.8 L200.2 366 Q207.5 383 211 400 L211 439.5 L200.8 439.5 L200.5 415 Q197.5 390 190.5 368.8 Z" fill="#a9a9a9"/>
<path d="M191 368 L200 365 L200.5 371 L192 373 Z" fill="#6e6e6e"/>
<line x1="416" y1="446" x2="428" y2="383" stroke="#8a8a8a" stroke-width="4"/>
<line x1="417.5" y1="446" x2="429.5" y2="383" stroke="#c0c0c0" stroke-width="1.5"/>
<line x1="432" y1="436" x2="442" y2="372" stroke="#8a8a8a" stroke-width="4"/>
<line x1="433.5" y1="436" x2="443.5" y2="372" stroke="#c0c0c0" stroke-width="1.5"/>
<line x1="447" y1="426" x2="455" y2="362" stroke="#8a8a8a" stroke-width="4"/>
<line x1="448.5" y1="426" x2="456.5" y2="362" stroke="#c0c0c0" stroke-width="1.5"/>
<polygon points="395.0,380.0 411.5,380.0 411.5,455.0 395.0,455.0" fill="#c4c4c4" />
<polygon points="412.0,430.0 473.3,382.7 479.3,383.3 479.3,396.0 420.6,449.6 412.0,449.6" fill="#4a4a4a" />
<polygon points="412.0,430.0 473.3,382.7 479.3,383.3 418.0,432.0" fill="#5a5a5a" />
<polygon points="412.0,430.0 418.0,431.0 420.6,449.6 412.0,449.6" fill="#a2a2a2" />
<linearGradient id="lbar" x1="1" y1="0" x2="0" y2="1"><stop offset="0" stop-color="#6a6a6a"/><stop offset="1" stop-color="#505050"/></linearGradient>
<polygon points="287.5,474.0 296.0,476.0 296.0,493.0 205.0,553.0 171.7,548.0" fill="url(#lbar)" />
<polygon points="433.8,570.7 491.6,492.5 496.0,491.3 498.5,497.0 450.8,588.9" fill="#4c4c4c" />
<polygon points="491.6,492.5 496.0,491.3 498.5,497.0 490.0,505.0" fill="#6a6a6a" />
<linearGradient id="cyl2" x1="0" y1="0" x2="0" y2="1"><stop offset="0" stop-color="#707070"/><stop offset="0.3" stop-color="#929292"/><stop offset="0.65" stop-color="#808080"/><stop offset="1" stop-color="#5a5a5a"/></linearGradient>
<polygon points="171.0,548.5 205.0,552.0 428.6,577.5 428.6,606.0 171.0,576.0" fill="url(#cyl2)" />
<polygon points="146.5,548.0 165.0,548.0 165.0,577.6 146.5,577.6" fill="#767676" />
<polygon points="165.0,546.0 171.7,541.0 171.7,574.0 165.0,577.6" fill="#5a5a5a" />
<polygon points="146.5,548.0 152.0,541.0 171.7,540.3 165.0,548.0" fill="#4a4a4a" />
<polygon points="146.5,577.6 165.0,577.6 171.7,574.0 171.7,578.0 165.0,582.3 146.5,582.3" fill="#f0f000" />
<path d="M151.5 597 Q151.5 583 161.5 583 Q171.5 583 171.5 597 Z" fill="url(#foot)"/>
<polygon points="428.6,577.5 447.5,577.5 447.5,612.0 428.6,612.0" fill="#7c7c7c" />
<polygon points="447.5,577.5 452.0,570.0 452.0,607.0 447.5,612.0" fill="#4a4a4a" />
<polygon points="428.6,577.5 435.0,570.0 452.0,570.0 447.5,577.5" fill="#3e3e3e" />
<polygon points="428.6,612.0 447.5,612.0 452.0,607.0 452.0,610.0 447.5,614.0 428.6,614.0" fill="#f0f000" />
<rect x="24" y="95.8" width="841" height="1" fill="#ececec" opacity="0.8"/>
<rect x="24" y="95" width="1" height="519" fill="#ececec" opacity="0.6"/>
<rect x="24" y="612.8" width="841" height="1.2" fill="#fafafa"/>
<line x1="61.5" y1="100" x2="61.5" y2="125.5" stroke="#7b7bff" stroke-width="1.3"/>
<line x1="61.5" y1="125.5" x2="87" y2="126.5" stroke="#e83a3a" stroke-width="1.3"/>
<line x1="61.5" y1="125.5" x2="65" y2="122.5" stroke="#3ac03a" stroke-width="1"/>
<rect x="221.5" y="98.5" width="445.5" height="40.5" fill="#000" opacity="0.235"/>
<g transform="translate(243 117)" fill="#e6e6e6"><circle r="6"/><rect x="-1.8" y="-8.2" width="3.6" height="16.4" transform="rotate(0)"/><rect x="-1.8" y="-8.2" width="3.6" height="16.4" transform="rotate(45)"/><rect x="-1.8" y="-8.2" width="3.6" height="16.4" transform="rotate(90)"/><rect x="-1.8" y="-8.2" width="3.6" height="16.4" transform="rotate(135)"/><circle r="2.6" fill="#999"/></g>
<path d="M239.5 129.5 H246.5 L243 134Z" fill="#e6e6e6"/>
<circle cx="277" cy="120.5" r="12.8" fill="none" stroke="#e6e6e6" stroke-width="1.4"/>
<path d="M270.5 114 V127 H272.5 V114Z M279 114 L272.8 120.5 L279 127Z M285.5 114 L279.3 120.5 L285.5 127Z" fill="#e6e6e6"/>
<circle cx="311.7" cy="120.5" r="12.8" fill="none" stroke="#e6e6e6" stroke-width="1.4"/>
<path d="M307 112.5 L319 120.5 L307 128.5Z" fill="#e6e6e6"/>
<text x="334.5" y="125.7" font-family="Liberation Sans" font-size="19.5" fill="#e8e8e8" opacity="0.85" textLength="62" lengthAdjust="spacingAndGlyphs">0:00:00</text>
<text x="432.5" y="123.5" font-family="Liberation Sans" font-size="10" fill="#9fc3e0">x</text>
<text x="446" y="123.5" font-family="Liberation Sans" font-size="12.5" fill="#9fc3e0">1.0</text>
<line x1="493" y1="118.5" x2="502" y2="118.5" stroke="#8fb0c8" stroke-width="1.6"/>
<line x1="511" y1="118.5" x2="540" y2="118.5" stroke="#8fb0c8" stroke-width="1.8"/>
<line x1="540" y1="118.5" x2="569" y2="118.5" stroke="#eeeeee" stroke-width="1.8"/>
<line x1="540.5" y1="111" x2="540.5" y2="126" stroke="#eeeeee" stroke-width="1.4"/>
<path d="M576.5 118.5 H585.5 M581 114 V123" stroke="#8fb0c8" stroke-width="1.6"/>
<path d="M596 111 H606 L610 115 V126 H596Z" fill="none" stroke="#e6e6e6" stroke-width="1.2"/>
<path d="M599 124 Q602 119 603 114 Q604 120 608 121 Q602 121 599 124Z" fill="none" stroke="#e6e6e6" stroke-width="1"/>
<rect x="614" y="115.5" width="12" height="9" rx="1.5" fill="#e6e6e6"/><path d="M626 120 L631 116 V124Z" fill="#e6e6e6"/>
<g stroke="#e2e2e2" fill="none"><path d="M635 113 L643.5 125.5" stroke-width="2.2" stroke-dasharray="1.6,1"/><path d="M637.5 113 L645.5 124.5" stroke-width="1.3"/><path d="M640 113 L647 122.5" stroke-width="2.2" stroke-dasharray="1.6,1"/></g><path d="M646.5 112.5 H652.5 L649.5 117Z" fill="#e6e6e6"/>
<rect x="24" y="234.5" width="37" height="240.5" fill="#d4d4d4" opacity="0.35"/>
<g stroke="#78bf6c" stroke-width="1.6" fill="none"><path d="M36 250 V246 H40 M36 246 L40.5 250.5 M49 250 V246 H45 M49 246 L44.5 250.5 M36 254 V258 H40 M36 258 L40.5 253.5 M49 254 V258 H45 M49 258 L44.5 253.5"/></g>
<rect x="35" y="269.5" width="15" height="15" fill="none" stroke="#9a9a9a" stroke-width="1"/>
<g stroke="#8a8a8a" stroke-width="1" fill="none"><path d="M37 272 L41 275 M48 272 L44 275 M37 282 L41 279 M48 282 L44 279"/></g>
<rect x="32.5" y="301" width="18.5" height="18" fill="#8cbad6"/>
<path d="M41 304 Q35 304 35 310 Q35 316 41 316 Z" fill="none" stroke="#e8c84a" stroke-width="1.2"/><path d="M41 306 H48 M41 310 H48 M41 314 H48 M41 304 V316" stroke="#e8c84a" stroke-width="1.2"/>
<path d="M34.5 332 H46 V343.5 H34.5Z M34.5 332 L38 328.5 H49.5 L46 332 M49.5 328.5 V340 L46 343.5" fill="none" stroke="#8c8c8c" stroke-width="1"/>
<path d="M29.5 363 H40 V372.5 H29.5Z" fill="#f2d58e"/><path d="M29.5 363 L33 360 H43 L40 363Z M40 363 L43 360 V369.5 L40 372.5Z" fill="#e8c066"/>
<path d="M48 366 H53.5 L50.75 370.5Z" fill="#7a7a7a"/>
<path d="M48 387 H53.5 L50.75 391.5Z" fill="#7a7a7a"/>
<path d="M48 409 H53.5 L50.75 413.5Z" fill="#7a7a7a"/>
<path d="M48 436 H53.5 L50.75 440.5Z" fill="#7a7a7a"/>
<path d="M48 458 H53.5 L50.75 462.5Z" fill="#7a7a7a"/>
<rect x="30" y="380" width="16.5" height="17" fill="#7fb2cc"/>
<path d="M33 382 V394 H45 M33 394 L42 385" stroke="#b58a8a" stroke-width="1" fill="none"/>
<path d="M32 403 V416.5" stroke="#7fc4e8" stroke-width="1.2"/><path d="M32 416.5 H44" stroke="#e05050" stroke-width="1.2"/><path d="M32 416.5 L40 407" stroke="#50b050" stroke-width="1.2"/>
<path d="M31 435 V431.5 H35 M42 431.5 H46 V435 M46 442 V445.5 H42 M35 445.5 H31 V442" fill="none" stroke="#8a8a8a" stroke-width="1.1"/><circle cx="38.5" cy="438.5" r="4.3" fill="none" stroke="#8a8a8a" stroke-width="1.1"/>
<path d="M37.3 453 L44 456.5 L37.3 460 L30.5 456.5Z" fill="#8ec8e8"/><path d="M30.5 456.5 L37.3 460 V467.5 L30.5 464Z" fill="#e07a7a"/><path d="M44 456.5 L37.3 460 V467.5 L44 464Z" fill="#7cc07c"/>
<polygon points="43.6,497.2 136.4,497.2 111.6,521.7 68.4,521.7" fill="#7a7a7a" />
<polygon points="70.0,528.0 110.0,528.0 110.0,568.4 70.0,568.4" fill="#7a7a7a" />
<polygon points="39.3,502.0 64.0,526.0 64.0,570.0 39.3,594.0" fill="#7a7a7a" />
<polygon points="140.9,502.0 116.4,526.0 116.4,570.0 140.9,594.0" fill="#7a7a7a" />
<polygon points="68.4,574.5 111.6,574.5 136.4,599.3 43.6,599.3" fill="#7a7a7a" stroke="#2ee4f2" stroke-width="1.3"/>
<text x="90" y="515" font-family="Liberation Sans" font-weight="bold" font-size="13" fill="#fff" text-anchor="middle">B</text>
<text x="51" y="553" font-family="Liberation Sans" font-weight="bold" font-size="13" fill="#fff" text-anchor="middle">L</text>
<text x="90" y="553" font-family="Liberation Sans" font-weight="bold" font-size="13" fill="#fff" text-anchor="middle">T</text>
<text x="129" y="553" font-family="Liberation Sans" font-weight="bold" font-size="13" fill="#fff" text-anchor="middle">R</text>
<text x="90" y="592" font-family="Liberation Sans" font-weight="bold" font-size="13" fill="#fff" text-anchor="middle">F</text>

</svg></div>

<div class="a" style="left:18px;top:95px;width:2px;height:640px;background:#444"></div>
<!-- right panel -->
<div class="a" style="left:868px;top:95px;width:2px;height:640px;background:#4a4a4a"></div>
<div class="a" style="left:870px;top:95px;width:100px;height:640px;background:#272727"></div>
<div class="a" style="left:870px;top:95px;width:100px;height:30px;background:#333;border-top:1px solid #474747"></div>
<div class="t" style="left:877.3px;top:102.4px;font-size:14px">Jog</div>
<svg class="a" style="left:874px;top:141px" width="8" height="6"><path d="M0 0 H7.5 L3.75 5.5Z" fill="#f0f0f0"/></svg>
<div class="t" style="left:886px;top:137.4px;font-size:14.2px">Servo</div>
<div class="t" style="left:886px;top:158.3px;font-size:16px;color:#35708f">Pallet Feeder</div>
<div class="t" style="left:886px;top:185.3px;font-size:11.2px">Coordinates</div>
<div class="a" style="left:886px;top:206px;width:14px;height:19px;background:#474747"></div>
<div class="a" style="left:900px;top:206px;width:70px;height:19px;background:#333"></div>
<div class="t" style="left:889px;top:210.5px;font-size:11px;color:#8a8a8a">X</div>
<div class="t" style="left:902px;top:210.5px;font-size:11px;color:#8a8a8a">-635.776</div>
<div class="a" style="left:886px;top:230px;width:14px;height:19px;background:#474747"></div>
<div class="a" style="left:900px;top:230px;width:70px;height:19px;background:#333"></div>
<div class="t" style="left:886.5px;top:235px;font-size:9.5px;color:#8a8a8a">Rx</div>
<div class="t" style="left:902px;top:234.5px;font-size:11px;color:#8a8a8a">0</div>
<svg class="a" style="left:874px;top:275px" width="8" height="6"><path d="M0 0 H7.5 L3.75 5.5Z" fill="#f0f0f0"/></svg>
<div class="t" style="left:886px;top:271.4px;font-size:14.4px">Joints</div>
<div class="t" style="left:886px;top:296.6px;font-size:12.85px">ProductPosition</div>

<!-- output -->
<div class="a" style="left:23px;top:618px;width:842px;height:117px;background:#272727;border:1px solid #4a4a4a"></div>
<div class="a" style="left:24px;top:619px;width:840px;height:28px;background:#333"></div>
<div class="t" style="left:32.5px;top:625px;font-size:15px;letter-spacing:0.5px">Output</div>
<svg class="a" style="left:806px;top:626px" width="14" height="15" viewBox="0 0 14 15"><path d="M3 1 H11 V3 H10 V6 L12 9 H8 V14 H6 V9 H2 L4 6 V3 H3Z" fill="#a8a8a8"/></svg>
<svg class="a" style="left:836px;top:627px" width="13" height="13" viewBox="0 0 13 13"><path d="M1.5 1.5 L11.5 11.5 M11.5 1.5 L1.5 11.5" stroke="#b0b0b0" stroke-width="2.6"/></svg>
<div class="t" style="left:27px;top:650.7px;font-size:13.25px;color:#4f9a2a">Pallet Feeder::ProductPosition exceeded speed limit of 100.</div>
<div class="t" style="left:27px;top:669.3px;font-size:13.25px;color:#4f9a2a">Pallet Feeder::ProductPosition exceeded acceleration limit of 500.</div>
<div class="t" style="left:27px;top:688.3px;font-size:13.25px;color:#4f9a2a">Pallet Feeder::Fork exceeded speed limit of 100.</div>
<div class="t" style="left:27px;top:707.4px;font-size:13.25px;color:#4f9a2a">Pallet Feeder::Fork exceeded acceleration limit of 500.</div>

<!-- red annotations -->
<svg class="a" style="left:0;top:0" width="970" height="750" viewBox="0 0 970 750"><g fill="none" stroke="#ea1b1b" stroke-width="3.5" stroke-linecap="round" stroke-linejoin="round">
<path d="M730.1 45.3 C731.1 46.2 734.1 48.5 736.0 50.5 C737.9 52.5 739.3 54.1 741.4 57.2 C743.5 60.3 747.2 65.8 748.7 69.0 C750.2 72.2 751.1 74.3 750.7 76.2 C750.4 78.1 749.7 79.5 746.6 80.4 C743.5 81.4 739.8 81.7 732.2 81.9 C724.6 82.2 711.5 82.0 701.2 81.9 C690.9 81.8 680.5 81.7 670.3 81.2 C660.1 80.7 650.7 79.8 640.0 79.0 C629.3 78.2 615.3 77.3 606.2 76.6 C597.1 75.8 590.6 75.6 585.6 74.5 C580.6 73.4 578.1 71.6 576.3 69.9 C574.5 68.2 573.6 66.2 574.8 64.2 C576.0 62.2 580.1 59.7 583.6 58.0 C587.1 56.3 591.9 54.8 596.0 53.9 C600.1 53.0 602.3 52.8 608.3 52.9 C614.3 53.0 622.5 53.6 632.0 54.4 C641.5 55.2 653.5 57.2 665.0 57.8 C676.5 58.4 688.5 58.3 701.2 58.2 C713.9 58.1 734.7 57.4 741.4 57.2"/>
<path d="M398.0 635.7 C396.8 634.8 395.7 631.7 391.0 630.0 C386.3 628.3 377.4 626.8 370.0 625.5 C362.6 624.2 361.5 623.4 346.5 622.3 C331.5 621.2 304.8 619.8 280.0 619.0 C255.2 618.2 224.7 617.8 198.0 617.4 C171.3 617.0 140.7 616.7 120.0 616.6 C99.3 616.5 87.6 616.6 74.0 616.8 C60.4 617.0 46.8 617.0 38.6 617.6 C30.4 618.2 29.0 618.4 25.0 620.5 C21.0 622.6 17.7 625.2 14.5 630.0 C11.3 634.8 7.7 641.3 5.8 649.4 C3.9 657.5 2.6 669.0 2.9 678.4 C3.2 687.8 5.0 697.1 7.7 705.5 C10.4 713.9 14.2 722.6 19.3 728.7 C24.5 734.8 31.2 739.2 38.6 742.2 C46.0 745.2 50.2 746.0 63.8 747.0 C77.4 748.0 89.4 747.9 120.0 748.0 C150.6 748.1 199.7 747.9 247.5 747.5 C295.3 747.1 375.3 746.3 407.0 745.5 C438.7 744.7 431.0 744.1 437.6 742.8 C444.2 741.4 443.6 741.9 446.6 737.4 C449.6 732.9 453.7 724.2 455.6 715.8 C457.6 707.4 458.3 694.8 458.3 687.0 C458.3 679.2 458.8 674.7 455.6 669.0 C452.5 663.3 446.0 657.5 439.4 652.8 C432.8 648.1 423.8 643.4 416.0 641.0 C408.2 638.6 395.6 639.3 392.6 638.4 C389.6 637.5 397.1 636.2 398.0 635.7"/>
</g></svg>

</body></html>
